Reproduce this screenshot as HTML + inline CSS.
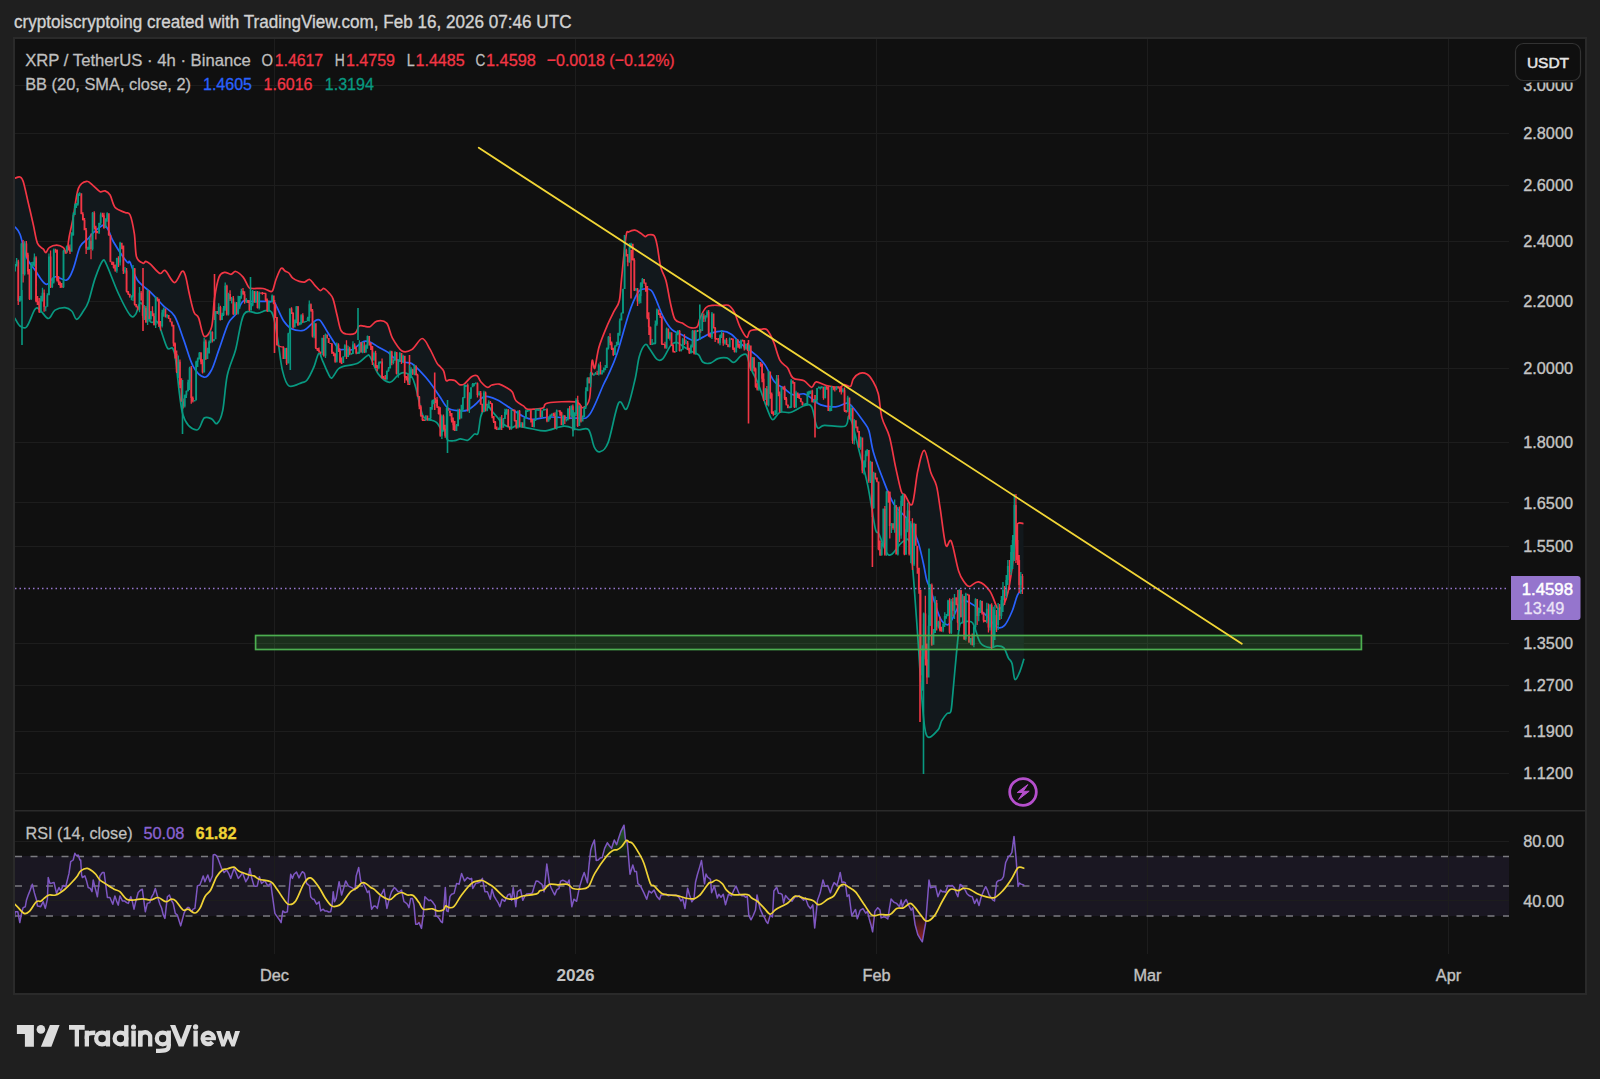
<!DOCTYPE html><html><head><meta charset="utf-8"><style>html,body{margin:0;padding:0;background:#1f1f1f;width:1600px;height:1079px;overflow:hidden}svg{display:block}text{font-family:"Liberation Sans", sans-serif}</style></head><body>
<svg width="1600" height="1079" viewBox="0 0 1600 1079" >
<rect x="0" y="0" width="1600" height="1079" fill="#1f1f1f"/>
<text x="14" y="28" font-size="17.5" fill="#d2d2d2" stroke="#d2d2d2" stroke-width="0.35" textLength="557.5" lengthAdjust="spacingAndGlyphs">cryptoiscryptoing created with TradingView.com, Feb 16, 2026 07:46 UTC</text>
<rect x="14" y="38" width="1572" height="956" fill="#101010" stroke="#2a2a2a" stroke-width="2"/>
<defs><clipPath id="mainclip"><rect x="15" y="39" width="1494" height="771"/></clipPath><clipPath id="rsiclip"><rect x="15" y="811" width="1494" height="143"/></clipPath><linearGradient id="obg" gradientUnits="userSpaceOnUse" x1="0" y1="822" x2="0" y2="856"><stop offset="0" stop-color="#2e7d32" stop-opacity="0.85"/><stop offset="1" stop-color="#2e7d32" stop-opacity="0.05"/></linearGradient><linearGradient id="osg" gradientUnits="userSpaceOnUse" x1="0" y1="916" x2="0" y2="944"><stop offset="0" stop-color="#c62828" stop-opacity="0.05"/><stop offset="1" stop-color="#c62828" stop-opacity="0.85"/></linearGradient></defs>
<path d="M15 85.5H1509 M15 133.5H1509 M15 185.5H1509 M15 241.5H1509 M15 301.5H1509 M15 368.5H1509 M15 442.5H1509 M15 502.5H1509 M15 546.5H1509 M15 643.5H1509 M15 685.5H1509 M15 731.5H1509 M15 773.5H1509 M274.5 39V954 M575.5 39V954 M876.5 39V954 M1147.5 39V954 M1448.5 39V954" stroke="#1d1d1d" stroke-width="1" fill="none"/>
<rect x="15" y="810" width="1570" height="1.5" fill="#2a2a2a"/>
<g clip-path="url(#mainclip)">
<polygon points="14.7,178.3 20.0,177.0 23.3,181.7 28.4,203.4 33.4,225.1 37.5,243.4 43.4,249.2 45.9,252.6 49.2,247.6 56.7,245.1 63.4,247.6 66.7,252.6 69.2,236.7 73.4,216.7 78.4,188.4 86.7,181.3 93.4,185.8 100.1,191.7 105.1,190.9 110.1,195.0 115.1,207.5 125.1,212.5 130.1,215.0 134.3,233.4 136.5,256.7 143.0,263.2 145.8,261.3 150.4,264.1 159.7,273.4 165.2,270.6 174.5,282.6 181.9,271.5 185.6,276.2 189.3,293.8 194.0,312.3 198.6,317.9 204.2,336.4 211.6,327.1 214.4,299.3 219.0,277.1 224.5,272.4 231.0,274.3 235.7,271.5 243.1,277.1 248.7,287.3 252.6,288.5 263.0,288.5 269.5,291.1 272.7,290.5 276.0,279.5 281.1,268.4 285.0,271.0 288.9,273.0 292.8,278.2 299.3,281.4 304.5,282.1 309.7,279.5 314.9,285.3 320.1,290.5 324.0,288.5 329.2,293.1 333.0,298.9 336.9,314.5 340.8,330.1 346.0,334.0 355.1,333.3 359.0,326.2 364.2,326.2 370.0,326.7 377.0,321.1 386.7,323.2 392.3,337.8 402.0,351.0 411.7,349.6 422.2,338.5 429.8,348.9 436.8,362.9 440.0,366.5 443.7,371.1 446.0,380.4 449.3,379.9 454.8,380.4 459.5,384.6 464.1,384.1 471.5,376.7 477.1,375.8 480.8,381.8 487.3,387.3 491.9,385.0 499.3,384.1 506.7,387.8 512.3,392.0 516.0,400.8 523.4,405.9 527.1,409.1 534.5,409.1 543.3,407.7 547.9,403.0 575.7,401.9 582.7,407.7 589.6,398.4 592.0,361.3 594.8,368.3 598.9,347.4 606.7,326.8 614.1,311.2 619.3,300.8 621.5,279.3 626.0,236.3 628.9,231.9 634.9,230.1 640.8,233.3 645.2,236.6 648.2,234.8 654.1,235.6 657.1,245.2 660.8,267.4 666.0,280.8 670.4,303.0 674.9,319.3 682.3,323.1 689.7,327.5 697.1,326.8 700.1,317.9 706.0,307.5 713.5,305.3 720.9,305.7 728.3,305.3 734.2,311.9 740.0,326.8 746.7,337.3 750.4,330.8 761.5,329.3 767.1,329.9 773.6,341.9 780.0,360.4 787.5,367.8 793.0,378.0 804.1,380.8 811.6,387.3 816.2,381.8 826.4,385.5 839.4,387.3 844.0,384.5 850.5,386.4 853.3,379.0 859.7,373.4 867.2,374.3 872.7,380.8 878.3,393.8 882.0,417.9 889.4,436.4 895.6,467.1 901.2,491.2 904.9,494.9 912.3,504.1 917.8,470.8 924.3,450.4 930.8,472.6 936.4,485.6 940.1,507.8 945.7,544.9 951.2,541.2 958.6,570.9 964.2,582.0 969.4,586.5 978.6,581.9 989.8,591.1 997.2,607.8 1000.9,607.8 1004.5,603.0 1008.0,592.0 1011.5,572.0 1014.5,547.0 1016.3,527.0 1019.0,523.0 1023.5,523.6 1024.0,658.8 1019.4,672.7 1014.8,679.2 1012.0,663.4 1008.3,657.8 1003.7,647.7 997.2,645.8 989.8,647.7 980.5,643.0 974.9,628.2 971.2,621.7 961.9,622.6 959.2,628.2 956.4,654.1 952.7,694.9 950.8,711.6 947.1,713.5 941.6,720.9 937.8,730.1 926.7,735.7 922.0,700.0 918.0,640.0 912.0,560.0 908.6,540.3 901.2,543.1 891.9,554.2 886.3,552.3 878.9,533.8 875.2,528.2 867.8,485.6 859.7,453.1 852.3,423.5 848.6,416.0 844.9,426.2 824.5,425.3 817.1,427.2 811.6,406.8 804.1,405.8 791.2,412.3 780.0,412.3 772.6,419.7 767.1,408.6 757.8,382.7 750.4,367.8 746.7,354.9 741.1,355.8 735.6,361.4 732.7,362.3 726.8,357.9 717.9,358.6 710.5,363.1 703.1,362.3 698.6,354.9 692.7,352.0 683.8,346.8 676.4,342.3 670.4,346.0 663.0,358.6 657.1,359.4 649.7,349.0 645.2,344.6 639.3,356.4 634.9,380.0 626.7,408.8 618.6,403.0 608.2,442.4 600.1,451.7 594.3,447.1 588.5,429.7 578.0,429.7 564.1,426.2 545.6,430.8 532.7,429.0 523.4,427.2 516.9,425.3 511.4,427.7 503.0,424.0 497.5,417.5 491.9,411.0 487.3,404.5 484.5,408.2 480.8,416.5 478.0,433.2 474.3,434.1 467.8,440.2 460.4,438.8 454.8,440.6 447.4,439.7 444.6,428.6 442.3,431.0 436.8,422.7 431.2,419.9 422.9,415.7 415.9,387.9 411.7,376.8 403.4,372.6 397.8,375.4 389.5,382.3 378.3,374.0 370.0,356.6 366.8,356.0 357.7,363.2 343.4,366.4 338.2,369.0 331.7,378.1 327.9,372.9 322.7,361.2 318.8,353.4 313.6,367.7 307.1,380.0 301.9,382.6 288.9,385.9 282.4,370.3 278.5,344.3 274.7,322.3 271.4,311.9 265.6,310.6 257.8,313.2 244.0,314.2 235.7,349.4 227.3,375.3 222.7,410.6 217.1,423.5 211.6,418.9 204.2,418.0 196.7,430.0 182.8,414.3 174.5,353.1 167.1,347.5 157.8,322.5 150.4,321.6 141.1,303.0 135.6,314.2 130.1,315.1 118.4,293.5 106.8,265.1 102.6,260.9 95.1,278.4 88.4,301.8 83.4,311.0 76.7,319.3 71.7,311.0 65.0,307.6 55.0,310.1 48.4,318.5 40.0,310.1 35.0,309.3 26.7,326.8 20.0,326.0 14.7,318.0" fill="#12181c"/>
<path d="M14.7 178.3C15.6 178.1 18.6 176.4 20.0 177.0C21.4 177.6 21.9 177.3 23.3 181.7C24.7 186.1 26.7 196.2 28.4 203.4C30.1 210.6 31.9 218.4 33.4 225.1C34.9 231.8 35.8 239.4 37.5 243.4C39.2 247.4 42.0 247.7 43.4 249.2C44.8 250.7 44.9 252.9 45.9 252.6C46.9 252.3 47.4 248.8 49.2 247.6C51.0 246.3 54.3 245.1 56.7 245.1C59.1 245.1 61.7 246.3 63.4 247.6C65.1 248.8 65.7 254.4 66.7 252.6C67.7 250.8 68.1 242.7 69.2 236.7C70.3 230.7 71.9 224.8 73.4 216.7C74.9 208.6 76.2 194.3 78.4 188.4C80.6 182.5 84.2 181.7 86.7 181.3C89.2 180.9 91.2 184.1 93.4 185.8C95.6 187.5 98.1 190.8 100.1 191.7C102.0 192.5 103.4 190.3 105.1 190.9C106.8 191.5 108.4 192.2 110.1 195.0C111.8 197.8 112.6 204.6 115.1 207.5C117.6 210.4 122.6 211.2 125.1 212.5C127.6 213.8 128.6 211.5 130.1 215.0C131.6 218.5 133.2 226.5 134.3 233.4C135.4 240.3 135.1 251.7 136.5 256.7C137.9 261.7 141.4 262.4 143.0 263.2C144.6 264.0 144.6 261.1 145.8 261.3C147.0 261.5 148.1 262.1 150.4 264.1C152.7 266.1 157.2 272.3 159.7 273.4C162.2 274.5 162.7 269.1 165.2 270.6C167.7 272.1 171.7 282.5 174.5 282.6C177.3 282.8 180.1 272.6 181.9 271.5C183.8 270.4 184.4 272.5 185.6 276.2C186.8 279.9 187.9 287.8 189.3 293.8C190.7 299.8 192.4 308.3 194.0 312.3C195.6 316.3 196.9 313.9 198.6 317.9C200.3 321.9 202.0 334.9 204.2 336.4C206.4 337.9 209.9 333.3 211.6 327.1C213.3 320.9 213.2 307.6 214.4 299.3C215.6 291.0 217.3 281.6 219.0 277.1C220.7 272.6 222.5 272.9 224.5 272.4C226.5 271.9 229.1 274.4 231.0 274.3C232.9 274.2 233.7 271.0 235.7 271.5C237.7 272.0 240.9 274.5 243.1 277.1C245.3 279.7 247.1 285.4 248.7 287.3C250.3 289.2 250.2 288.3 252.6 288.5C255.0 288.7 260.2 288.1 263.0 288.5C265.8 288.9 267.9 290.8 269.5 291.1C271.1 291.4 271.6 292.4 272.7 290.5C273.8 288.6 274.6 283.2 276.0 279.5C277.4 275.8 279.6 269.8 281.1 268.4C282.6 267.0 283.7 270.2 285.0 271.0C286.3 271.8 287.6 271.8 288.9 273.0C290.2 274.2 291.1 276.8 292.8 278.2C294.5 279.6 297.4 280.8 299.3 281.4C301.2 282.0 302.8 282.4 304.5 282.1C306.2 281.8 308.0 279.0 309.7 279.5C311.4 280.0 313.2 283.5 314.9 285.3C316.6 287.1 318.6 290.0 320.1 290.5C321.6 291.0 322.5 288.1 324.0 288.5C325.5 288.9 327.7 291.4 329.2 293.1C330.7 294.8 331.7 295.3 333.0 298.9C334.3 302.5 335.6 309.3 336.9 314.5C338.2 319.7 339.3 326.9 340.8 330.1C342.3 333.4 343.6 333.5 346.0 334.0C348.4 334.5 352.9 334.6 355.1 333.3C357.3 332.0 357.5 327.4 359.0 326.2C360.5 325.0 362.4 326.1 364.2 326.2C366.0 326.3 367.9 327.5 370.0 326.7C372.1 325.9 374.2 321.7 377.0 321.1C379.8 320.5 384.1 320.4 386.7 323.2C389.2 326.0 389.8 333.2 392.3 337.8C394.9 342.4 398.8 349.0 402.0 351.0C405.2 353.0 408.3 351.7 411.7 349.6C415.1 347.5 419.2 338.6 422.2 338.5C425.2 338.4 427.4 344.8 429.8 348.9C432.2 353.0 435.1 360.0 436.8 362.9C438.5 365.8 438.9 365.1 440.0 366.5C441.1 367.9 442.7 368.8 443.7 371.1C444.7 373.4 445.1 378.9 446.0 380.4C446.9 381.9 447.8 379.9 449.3 379.9C450.8 379.9 453.1 379.6 454.8 380.4C456.5 381.2 457.9 384.0 459.5 384.6C461.1 385.2 462.1 385.4 464.1 384.1C466.1 382.8 469.3 378.1 471.5 376.7C473.7 375.3 475.6 374.9 477.1 375.8C478.7 376.7 479.1 379.9 480.8 381.8C482.5 383.7 485.5 386.8 487.3 387.3C489.1 387.8 489.9 385.5 491.9 385.0C493.9 384.5 496.8 383.6 499.3 384.1C501.8 384.6 504.5 386.5 506.7 387.8C508.9 389.1 510.7 389.8 512.3 392.0C513.8 394.2 514.1 398.5 516.0 400.8C517.9 403.1 521.5 404.5 523.4 405.9C525.2 407.3 525.2 408.6 527.1 409.1C529.0 409.6 531.8 409.3 534.5 409.1C537.2 408.9 541.1 408.7 543.3 407.7C545.5 406.7 542.5 404.0 547.9 403.0C553.3 402.0 569.9 401.1 575.7 401.9C581.5 402.7 580.4 408.3 582.7 407.7C585.0 407.1 588.1 406.1 589.6 398.4C591.1 390.7 591.1 366.3 592.0 361.3C592.9 356.3 593.6 370.6 594.8 368.3C595.9 366.0 596.9 354.3 598.9 347.4C600.9 340.5 604.2 332.8 606.7 326.8C609.2 320.8 612.0 315.5 614.1 311.2C616.2 306.9 618.1 306.1 619.3 300.8C620.5 295.5 620.4 290.1 621.5 279.3C622.6 268.6 624.8 244.2 626.0 236.3C627.2 228.4 627.4 232.9 628.9 231.9C630.4 230.9 632.9 229.9 634.9 230.1C636.9 230.3 639.1 232.2 640.8 233.3C642.5 234.4 644.0 236.3 645.2 236.6C646.4 236.8 646.7 235.0 648.2 234.8C649.7 234.6 652.6 233.9 654.1 235.6C655.6 237.3 656.0 239.9 657.1 245.2C658.2 250.5 659.3 261.5 660.8 267.4C662.3 273.3 664.4 274.9 666.0 280.8C667.6 286.7 668.9 296.6 670.4 303.0C671.9 309.4 672.9 315.9 674.9 319.3C676.9 322.7 679.8 321.7 682.3 323.1C684.8 324.5 687.2 326.9 689.7 327.5C692.2 328.1 695.4 328.4 697.1 326.8C698.8 325.2 698.6 321.1 700.1 317.9C701.6 314.7 703.8 309.6 706.0 307.5C708.2 305.4 711.0 305.6 713.5 305.3C716.0 305.0 718.4 305.7 720.9 305.7C723.4 305.7 726.1 304.3 728.3 305.3C730.5 306.3 732.2 308.3 734.2 311.9C736.2 315.5 737.9 322.6 740.0 326.8C742.1 331.0 745.0 336.6 746.7 337.3C748.4 338.0 747.9 332.1 750.4 330.8C752.9 329.5 758.7 329.5 761.5 329.3C764.3 329.1 765.1 327.8 767.1 329.9C769.1 332.0 771.5 336.8 773.6 341.9C775.8 347.0 777.7 356.1 780.0 360.4C782.3 364.7 785.3 364.9 787.5 367.8C789.7 370.7 790.2 375.8 793.0 378.0C795.8 380.2 801.0 379.2 804.1 380.8C807.2 382.4 809.6 387.1 811.6 387.3C813.6 387.5 813.7 382.1 816.2 381.8C818.7 381.5 822.5 384.6 826.4 385.5C830.3 386.4 836.5 387.5 839.4 387.3C842.3 387.1 842.1 384.6 844.0 384.5C845.9 384.4 849.0 387.3 850.5 386.4C852.0 385.5 851.8 381.2 853.3 379.0C854.8 376.8 857.4 374.2 859.7 373.4C862.0 372.6 865.0 373.1 867.2 374.3C869.4 375.5 870.9 377.6 872.7 380.8C874.6 384.1 876.8 387.6 878.3 393.8C879.8 400.0 880.1 410.8 882.0 417.9C883.9 425.0 887.1 428.2 889.4 436.4C891.7 444.6 893.6 458.0 895.6 467.1C897.6 476.2 899.7 486.6 901.2 491.2C902.8 495.8 903.0 492.8 904.9 494.9C906.8 497.0 910.1 508.1 912.3 504.1C914.4 500.1 915.8 479.8 917.8 470.8C919.8 461.9 922.1 450.1 924.3 450.4C926.5 450.7 928.8 466.7 930.8 472.6C932.8 478.5 934.8 479.7 936.4 485.6C938.0 491.5 938.5 497.9 940.1 507.8C941.7 517.7 943.9 539.3 945.7 544.9C947.6 550.5 949.1 536.9 951.2 541.2C953.4 545.5 956.4 564.1 958.6 570.9C960.8 577.7 962.4 579.4 964.2 582.0C966.0 584.6 967.0 586.5 969.4 586.5C971.8 586.5 975.2 581.1 978.6 581.9C982.0 582.7 986.7 586.8 989.8 591.1C992.9 595.4 995.4 605.0 997.2 607.8C999.1 610.6 999.7 608.6 1000.9 607.8C1002.1 607.0 1003.3 605.6 1004.5 603.0C1005.7 600.4 1006.8 597.2 1008.0 592.0C1009.2 586.8 1010.4 579.5 1011.5 572.0C1012.6 564.5 1013.7 554.5 1014.5 547.0C1015.3 539.5 1015.5 531.0 1016.3 527.0C1017.0 523.0 1017.8 523.6 1019.0 523.0C1020.2 522.4 1022.8 523.5 1023.5 523.6" fill="none" stroke="#f23645" stroke-width="1.7" stroke-linejoin="round"/>
<path d="M14.7 318.0C15.6 319.3 18.0 324.5 20.0 326.0C22.0 327.5 24.2 329.6 26.7 326.8C29.2 324.0 32.8 312.1 35.0 309.3C37.2 306.5 37.8 308.6 40.0 310.1C42.2 311.6 45.9 318.5 48.4 318.5C50.9 318.5 52.2 311.9 55.0 310.1C57.8 308.3 62.2 307.5 65.0 307.6C67.8 307.8 69.8 309.1 71.7 311.0C73.7 312.9 74.8 319.3 76.7 319.3C78.7 319.3 81.5 313.9 83.4 311.0C85.4 308.1 86.5 307.2 88.4 301.8C90.4 296.4 92.7 285.2 95.1 278.4C97.5 271.6 100.6 263.1 102.6 260.9C104.5 258.7 104.2 259.7 106.8 265.1C109.4 270.5 114.5 285.2 118.4 293.5C122.3 301.8 127.2 311.7 130.1 315.1C133.0 318.6 133.8 316.2 135.6 314.2C137.4 312.2 138.6 301.8 141.1 303.0C143.6 304.2 147.6 318.4 150.4 321.6C153.2 324.9 155.0 318.2 157.8 322.5C160.6 326.8 164.3 342.4 167.1 347.5C169.9 352.6 171.9 342.0 174.5 353.1C177.1 364.2 179.1 401.5 182.8 414.3C186.5 427.1 193.1 429.4 196.7 430.0C200.3 430.6 201.7 419.9 204.2 418.0C206.7 416.1 209.4 418.0 211.6 418.9C213.8 419.8 215.2 424.9 217.1 423.5C218.9 422.1 221.0 418.6 222.7 410.6C224.4 402.6 225.1 385.5 227.3 375.3C229.5 365.1 232.9 359.6 235.7 349.4C238.5 339.2 240.3 320.2 244.0 314.2C247.7 308.2 254.2 313.8 257.8 313.2C261.4 312.6 263.3 310.8 265.6 310.6C267.9 310.4 269.9 309.9 271.4 311.9C272.9 313.8 273.5 316.9 274.7 322.3C275.9 327.7 277.2 336.3 278.5 344.3C279.8 352.3 280.7 363.4 282.4 370.3C284.1 377.2 285.6 383.8 288.9 385.9C292.1 387.9 298.9 383.6 301.9 382.6C304.9 381.6 305.2 382.5 307.1 380.0C309.1 377.5 311.7 372.1 313.6 367.7C315.6 363.3 317.3 354.5 318.8 353.4C320.3 352.3 321.2 357.9 322.7 361.2C324.2 364.4 326.4 370.1 327.9 372.9C329.4 375.7 330.0 378.8 331.7 378.1C333.4 377.5 336.2 370.9 338.2 369.0C340.1 367.1 340.1 367.4 343.4 366.4C346.6 365.4 353.8 364.9 357.7 363.2C361.6 361.5 364.8 357.1 366.8 356.0C368.9 354.9 368.1 353.6 370.0 356.6C371.9 359.6 375.1 369.7 378.3 374.0C381.6 378.3 386.2 382.1 389.5 382.3C392.8 382.5 395.5 377.0 397.8 375.4C400.1 373.8 401.1 372.4 403.4 372.6C405.7 372.8 409.6 374.2 411.7 376.8C413.8 379.4 414.0 381.4 415.9 387.9C417.8 394.4 420.3 410.4 422.9 415.7C425.4 421.0 428.9 418.7 431.2 419.9C433.5 421.1 434.9 420.8 436.8 422.7C438.7 424.6 441.0 430.0 442.3 431.0C443.6 432.0 443.8 427.2 444.6 428.6C445.5 430.1 445.7 437.7 447.4 439.7C449.1 441.7 452.6 440.8 454.8 440.6C457.0 440.5 458.2 438.9 460.4 438.8C462.6 438.7 465.5 441.0 467.8 440.2C470.1 439.4 472.6 435.3 474.3 434.1C476.0 432.9 476.9 436.1 478.0 433.2C479.1 430.3 479.7 420.7 480.8 416.5C481.9 412.3 483.4 410.2 484.5 408.2C485.6 406.2 486.1 404.0 487.3 404.5C488.5 405.0 490.2 408.8 491.9 411.0C493.6 413.2 495.6 415.3 497.5 417.5C499.4 419.7 500.7 422.3 503.0 424.0C505.3 425.7 509.1 427.5 511.4 427.7C513.7 427.9 514.9 425.4 516.9 425.3C518.9 425.2 520.8 426.6 523.4 427.2C526.0 427.8 529.0 428.4 532.7 429.0C536.4 429.6 540.4 431.3 545.6 430.8C550.8 430.3 558.7 426.4 564.1 426.2C569.5 426.0 573.9 429.1 578.0 429.7C582.1 430.3 585.8 426.8 588.5 429.7C591.2 432.6 592.4 443.4 594.3 447.1C596.2 450.8 597.8 452.5 600.1 451.7C602.4 450.9 605.1 450.5 608.2 442.4C611.3 434.3 615.5 408.6 618.6 403.0C621.7 397.4 624.0 412.6 626.7 408.8C629.4 405.0 632.8 388.7 634.9 380.0C637.0 371.3 637.6 362.3 639.3 356.4C641.0 350.5 643.5 345.8 645.2 344.6C646.9 343.4 647.7 346.5 649.7 349.0C651.7 351.5 654.9 357.8 657.1 359.4C659.3 361.0 660.8 360.8 663.0 358.6C665.2 356.4 668.2 348.7 670.4 346.0C672.6 343.3 674.2 342.2 676.4 342.3C678.6 342.4 681.1 345.2 683.8 346.8C686.5 348.4 690.2 350.6 692.7 352.0C695.2 353.4 696.9 353.2 698.6 354.9C700.3 356.6 701.1 360.9 703.1 362.3C705.1 363.7 708.0 363.7 710.5 363.1C713.0 362.5 715.2 359.5 717.9 358.6C720.6 357.7 724.3 357.3 726.8 357.9C729.3 358.5 731.2 361.7 732.7 362.3C734.2 362.9 734.2 362.5 735.6 361.4C737.0 360.3 739.2 356.9 741.1 355.8C743.0 354.7 745.2 352.9 746.7 354.9C748.2 356.9 748.5 363.2 750.4 367.8C752.2 372.4 755.0 375.9 757.8 382.7C760.6 389.5 764.6 402.4 767.1 408.6C769.6 414.8 770.5 419.1 772.6 419.7C774.8 420.3 776.9 413.5 780.0 412.3C783.1 411.1 787.2 413.4 791.2 412.3C795.2 411.2 800.7 406.7 804.1 405.8C807.5 404.9 809.4 403.2 811.6 406.8C813.8 410.4 815.0 424.1 817.1 427.2C819.2 430.3 819.9 425.5 824.5 425.3C829.1 425.1 840.9 427.8 844.9 426.2C848.9 424.6 847.4 416.4 848.6 416.0C849.8 415.6 850.4 417.3 852.3 423.5C854.1 429.7 857.1 442.8 859.7 453.1C862.3 463.5 865.2 473.1 867.8 485.6C870.4 498.1 873.4 520.2 875.2 528.2C877.1 536.2 877.0 529.8 878.9 533.8C880.8 537.8 884.1 548.9 886.3 552.3C888.5 555.7 889.4 555.7 891.9 554.2C894.4 552.7 898.4 545.4 901.2 543.1C904.0 540.8 906.8 537.5 908.6 540.3C910.4 543.1 910.4 543.4 912.0 560.0C913.6 576.6 916.3 616.7 918.0 640.0C919.7 663.3 920.5 684.0 922.0 700.0C923.5 716.0 924.1 730.7 926.7 735.7C929.3 740.7 935.3 732.6 937.8 730.1C940.3 727.6 940.0 723.7 941.6 720.9C943.2 718.1 945.6 715.0 947.1 713.5C948.6 712.0 949.9 714.7 950.8 711.6C951.7 708.5 951.8 704.5 952.7 694.9C953.6 685.3 955.3 665.2 956.4 654.1C957.5 643.0 958.3 633.5 959.2 628.2C960.1 623.0 959.9 623.7 961.9 622.6C963.9 621.5 969.0 620.8 971.2 621.7C973.4 622.6 973.4 624.7 974.9 628.2C976.4 631.8 978.0 639.8 980.5 643.0C983.0 646.2 987.0 647.2 989.8 647.7C992.6 648.2 994.9 645.8 997.2 645.8C999.5 645.8 1001.9 645.7 1003.7 647.7C1005.6 649.7 1006.9 655.2 1008.3 657.8C1009.7 660.4 1010.9 659.8 1012.0 663.4C1013.1 667.0 1013.6 677.7 1014.8 679.2C1016.0 680.8 1017.9 676.1 1019.4 672.7C1020.9 669.3 1023.2 661.1 1024.0 658.8" fill="none" stroke="#089981" stroke-width="1.7" stroke-linejoin="round"/>
<path d="M14.7 226.7C15.6 227.9 18.0 229.0 20.0 234.2C22.0 239.3 24.2 251.6 26.7 257.6C29.2 263.6 31.8 265.7 35.0 270.1C38.2 274.6 42.6 283.2 45.9 284.3C49.2 285.4 51.5 277.5 55.0 276.8C58.5 276.1 63.6 281.5 66.7 280.1C69.8 278.7 71.2 274.0 73.4 268.4C75.6 262.8 77.6 251.7 80.1 246.7C82.6 241.7 86.2 240.8 88.4 238.4C90.6 236.1 90.9 234.8 93.4 232.6C95.9 230.4 100.9 225.5 103.4 225.1C105.9 224.7 106.7 227.3 108.4 230.1C110.1 232.9 110.3 236.4 113.4 241.7C116.5 247.0 124.0 258.4 126.8 261.8C129.6 265.2 128.2 259.2 130.0 262.2C131.8 265.2 133.7 274.6 137.4 279.9C141.1 285.2 147.9 289.5 152.2 293.8C156.5 298.1 159.7 302.1 163.4 305.8C167.1 309.5 171.1 310.3 174.5 316.0C177.9 321.7 180.7 331.8 183.8 340.1C186.9 348.5 189.6 359.9 193.0 366.1C196.4 372.3 201.1 376.6 204.2 377.2C207.3 377.8 209.1 374.4 211.6 369.8C214.1 365.2 216.2 357.1 219.0 349.4C221.8 341.7 225.5 329.3 228.3 323.4C231.1 317.5 233.2 317.9 235.7 314.2C238.2 310.5 240.3 303.3 243.1 301.2C245.9 299.1 247.8 301.4 252.6 301.5C257.4 301.6 268.2 300.9 272.1 301.5C276.0 302.1 274.1 302.1 276.0 305.4C277.9 308.6 281.1 317.1 283.7 321.0C286.3 324.9 288.5 327.2 291.5 328.8C294.5 330.4 299.3 330.8 301.9 330.7C304.5 330.6 304.9 329.7 307.1 328.1C309.3 326.5 312.7 322.3 314.9 321.0C317.1 319.7 317.9 318.4 320.1 320.3C322.3 322.2 324.9 328.1 327.9 332.7C330.9 337.3 335.6 345.4 338.2 348.2C340.8 351.0 341.0 349.3 343.4 349.5C345.8 349.7 349.2 350.8 352.5 349.5C355.8 348.2 360.0 342.9 362.9 341.7C365.8 340.4 367.4 341.1 370.0 342.0C372.6 342.9 375.3 345.2 378.3 346.9C381.3 348.6 385.3 350.4 388.1 352.4C390.9 354.4 392.2 357.1 395.0 358.7C397.8 360.3 402.0 361.4 404.8 362.2C407.6 363.0 409.1 362.0 411.7 363.5C414.2 365.0 417.1 368.1 420.1 371.2C423.1 374.3 426.6 378.1 429.8 382.3C433.0 386.5 436.5 391.9 439.5 396.2C442.5 400.5 444.6 405.7 447.9 408.1C451.1 410.5 455.8 410.5 459.0 410.8C462.2 411.1 464.7 411.2 467.4 410.1C470.1 409.1 472.7 406.6 475.2 404.5C477.7 402.4 480.4 398.8 482.6 397.5C484.8 396.2 485.7 396.2 488.2 396.6C490.7 397.0 493.8 398.0 497.5 399.9C501.2 401.8 506.1 405.4 510.4 408.2C514.7 411.0 519.7 414.6 523.4 416.5C527.1 418.4 528.2 419.2 532.7 419.3C537.2 419.4 542.7 417.2 550.2 417.0C557.8 416.8 571.4 418.5 578.0 418.1C584.6 417.7 585.4 420.2 589.6 414.6C593.9 409.0 600.4 391.1 603.5 384.5C606.6 377.9 605.9 380.2 608.2 375.0C610.5 369.8 613.7 363.8 617.1 353.5C620.5 343.2 625.5 323.5 628.9 313.4C632.3 303.3 635.3 296.8 637.8 292.7C640.3 288.6 641.6 289.4 643.8 289.0C646.0 288.6 649.2 288.8 651.2 290.4C653.2 292.0 653.6 294.3 655.6 298.6C657.6 302.9 660.3 311.2 663.0 316.4C665.7 321.6 668.9 326.7 671.9 329.7C674.9 332.7 677.1 332.3 680.8 334.2C684.5 336.1 690.5 340.3 694.2 340.8C697.9 341.3 700.4 338.3 703.1 337.1C705.8 335.9 707.3 334.4 710.5 333.4C713.7 332.4 718.8 331.1 722.3 331.2C725.8 331.3 728.1 332.1 731.2 334.2C734.3 336.3 738.2 341.3 741.1 343.8C744.0 346.3 745.7 347.2 748.5 349.3C751.3 351.4 755.0 354.1 757.8 356.7C760.6 359.3 762.4 360.9 765.2 365.1C768.0 369.3 771.4 378.0 774.5 381.8C777.6 385.6 780.7 386.1 783.8 388.2C786.9 390.3 789.6 393.8 793.0 394.7C796.4 395.6 801.0 393.2 804.1 393.8C807.2 394.4 808.8 396.5 811.6 398.4C814.4 400.2 816.8 403.5 820.8 404.9C824.8 406.3 831.4 407.1 835.7 406.8C840.0 406.5 844.0 403.1 846.8 403.1C849.6 403.1 849.5 403.7 852.3 406.8C855.1 409.9 860.7 417.6 863.5 421.6C866.3 425.6 867.4 425.8 869.0 430.9C870.6 436.0 871.1 444.3 873.4 452.2C875.7 460.1 879.2 469.5 882.6 478.2C886.0 486.9 889.5 497.0 893.8 504.1C898.1 511.2 904.6 514.6 908.6 520.8C912.6 527.0 915.3 534.1 917.8 541.2C920.3 548.3 921.9 557.0 923.4 563.5C924.9 570.0 925.5 575.7 926.7 580.0C927.9 584.3 928.2 583.1 930.4 589.3C932.6 595.5 937.1 611.2 939.7 617.1C942.3 623.0 944.4 623.7 946.2 624.5C948.1 625.3 948.8 624.6 950.8 621.7C952.8 618.8 956.0 610.5 958.2 606.9C960.4 603.3 961.0 600.5 963.8 600.4C966.6 600.2 971.2 603.5 974.9 606.0C978.6 608.5 982.3 611.7 986.0 615.2C989.7 618.8 994.1 625.6 997.2 627.3C1000.3 629.0 1002.1 628.0 1004.6 625.4C1007.1 622.8 1009.8 616.6 1012.0 611.5C1014.2 606.4 1015.9 598.3 1017.6 594.8C1019.3 591.2 1021.4 591.0 1022.2 590.2" fill="none" stroke="#2962ff" stroke-width="1.7" stroke-linejoin="round"/>
<path d="M17.58 259.8h1.3V304.9h-1.3ZM17.28 261.6h1.9V301.1h-1.9ZM22.44 240.1h1.3V282.5h-1.3ZM22.14 243.7h1.9V274.1h-1.9ZM25.67 241.0h1.3V257.7h-1.3ZM25.37 243.5h1.9V254.7h-1.9ZM27.29 252.8h1.3V274.5h-1.3ZM26.99 254.7h1.9V271.4h-1.9ZM28.90 268.9h1.3V300.0h-1.3ZM28.60 271.4h1.9V299.0h-1.9ZM35.37 256.3h1.3V302.2h-1.3ZM35.07 257.5h1.9V301.3h-1.9ZM36.99 296.0h1.3V305.1h-1.3ZM36.69 301.3h1.9V304.9h-1.9ZM38.60 298.0h1.3V313.0h-1.3ZM38.30 304.9h1.9V312.0h-1.9ZM43.46 289.6h1.3V311.8h-1.3ZM43.16 292.8h1.9V306.8h-1.9ZM49.92 250.4h1.3V288.0h-1.3ZM49.62 256.4h1.9V287.0h-1.9ZM54.77 248.8h1.3V252.7h-1.3ZM54.47 249.6h1.9V250.6h-1.9ZM56.39 249.4h1.3V281.4h-1.3ZM56.09 249.8h1.9V280.6h-1.9ZM58.01 276.0h1.3V284.9h-1.3ZM57.71 280.6h1.9V283.0h-1.9ZM59.63 281.5h1.3V288.0h-1.3ZM59.33 283.0h1.9V285.9h-1.9ZM61.24 283.1h1.3V288.0h-1.3ZM60.94 285.9h1.9V287.0h-1.9ZM64.48 250.2h1.3V253.8h-1.3ZM64.18 250.7h1.9V251.7h-1.9ZM67.71 245.3h1.3V250.6h-1.3ZM67.41 246.4h1.9V248.5h-1.9ZM69.33 244.4h1.3V254.1h-1.3ZM69.03 248.5h1.9V251.7h-1.9ZM80.65 195.6h1.3V214.2h-1.3ZM80.35 193.2h1.9V213.9h-1.9ZM82.26 212.2h1.3V220.4h-1.3ZM81.96 213.9h1.9V219.9h-1.9ZM83.88 217.9h1.3V230.2h-1.3ZM83.58 219.9h1.9V230.2h-1.9ZM85.50 228.1h1.3V254.0h-1.3ZM85.20 230.2h1.9V248.6h-1.9ZM90.35 233.4h1.3V259.3h-1.3ZM90.05 240.8h1.9V248.9h-1.9ZM93.58 211.3h1.3V229.6h-1.3ZM93.28 212.8h1.9V227.4h-1.9ZM95.20 225.8h1.3V239.4h-1.3ZM94.90 227.4h1.9V232.3h-1.9ZM96.82 231.0h1.3V232.9h-1.3ZM96.52 232.3h1.9V233.3h-1.9ZM101.67 212.7h1.3V217.2h-1.3ZM101.37 214.5h1.9V215.6h-1.9ZM103.29 212.7h1.3V228.7h-1.3ZM102.99 215.6h1.9V228.1h-1.9ZM108.14 219.5h1.3V235.7h-1.3ZM107.84 213.3h1.9V235.2h-1.9ZM109.75 234.8h1.3V262.3h-1.3ZM109.45 235.2h1.9V261.8h-1.9ZM111.37 261.4h1.3V265.0h-1.3ZM111.07 261.8h1.9V264.8h-1.9ZM112.99 261.8h1.3V268.6h-1.3ZM112.69 264.8h1.9V267.8h-1.9ZM114.60 264.5h1.3V271.8h-1.3ZM114.30 267.8h1.9V270.8h-1.9ZM117.84 256.3h1.3V267.0h-1.3ZM117.54 258.1h1.9V262.6h-1.9ZM121.07 244.5h1.3V249.3h-1.3ZM120.77 242.8h1.9V245.5h-1.9ZM122.69 247.2h1.3V273.9h-1.3ZM122.39 245.5h1.9V271.1h-1.9ZM125.92 267.9h1.3V292.5h-1.3ZM125.62 270.5h1.9V291.5h-1.9ZM127.54 291.0h1.3V295.1h-1.3ZM127.24 291.5h1.9V294.1h-1.9ZM129.16 293.8h1.3V297.7h-1.3ZM128.86 294.1h1.9V296.7h-1.9ZM134.01 267.9h1.3V305.5h-1.3ZM133.71 268.4h1.9V304.5h-1.9ZM135.63 304.1h1.3V307.4h-1.3ZM135.33 304.5h1.9V307.0h-1.9ZM137.24 306.2h1.3V310.6h-1.3ZM136.94 307.0h1.9V309.6h-1.9ZM140.48 291.0h1.3V300.6h-1.3ZM140.18 292.8h1.9V300.5h-1.9ZM142.09 300.3h1.3V318.1h-1.3ZM141.79 300.5h1.9V315.8h-1.9ZM145.33 306.0h1.3V323.0h-1.3ZM145.03 307.8h1.9V322.0h-1.9ZM148.56 290.8h1.3V319.0h-1.3ZM148.26 290.4h1.9V318.9h-1.9ZM151.79 306.2h1.3V316.2h-1.3ZM151.49 311.2h1.9V316.0h-1.9ZM153.41 313.2h1.3V325.6h-1.3ZM153.11 316.0h1.9V325.0h-1.9ZM156.65 297.7h1.3V301.6h-1.3ZM156.35 297.3h1.9V298.7h-1.9ZM158.26 299.1h1.3V326.9h-1.3ZM157.96 298.7h1.9V324.5h-1.9ZM159.88 321.0h1.3V330.6h-1.3ZM159.58 324.5h1.9V326.0h-1.9ZM164.73 310.8h1.3V317.5h-1.3ZM164.43 308.5h1.9V316.5h-1.9ZM167.96 317.2h1.3V318.9h-1.3ZM167.66 315.0h1.9V318.2h-1.9ZM169.58 320.5h1.3V322.2h-1.3ZM169.28 318.2h1.9V321.5h-1.9ZM171.20 323.7h1.3V326.5h-1.3ZM170.90 321.5h1.9V324.7h-1.9ZM172.82 326.9h1.3V346.4h-1.3ZM172.52 324.7h1.9V343.4h-1.9ZM174.43 342.4h1.3V358.5h-1.3ZM174.13 343.4h1.9V354.0h-1.9ZM176.05 350.4h1.3V373.1h-1.3ZM175.75 354.0h1.9V372.3h-1.9ZM179.28 359.6h1.3V388.2h-1.3ZM178.98 361.8h1.9V384.8h-1.9ZM180.90 378.2h1.3V401.8h-1.3ZM180.60 384.8h1.9V401.4h-1.9ZM182.52 398.5h1.3V408.4h-1.3ZM182.22 401.4h1.9V406.2h-1.9ZM190.60 365.9h1.3V403.7h-1.3ZM190.30 367.8h1.9V398.0h-1.9ZM192.22 396.6h1.3V402.6h-1.3ZM191.92 398.0h1.9V401.6h-1.9ZM200.30 352.1h1.3V364.2h-1.3ZM200.00 353.1h1.9V361.7h-1.9ZM201.92 359.2h1.3V373.5h-1.3ZM201.62 361.7h1.9V372.5h-1.9ZM205.16 339.5h1.3V360.0h-1.3ZM204.86 341.4h1.9V359.0h-1.9ZM211.62 331.2h1.3V342.4h-1.3ZM211.32 331.9h1.9V341.2h-1.9ZM216.47 311.0h1.3V314.0h-1.3ZM216.17 311.0h1.9V313.4h-1.9ZM219.71 305.7h1.3V320.4h-1.3ZM219.41 306.9h1.9V319.9h-1.9ZM226.18 284.8h1.3V315.6h-1.3ZM225.88 285.7h1.9V314.6h-1.9ZM229.41 290.3h1.3V301.0h-1.3ZM229.11 294.0h1.9V299.3h-1.9ZM232.64 295.9h1.3V315.0h-1.3ZM232.34 298.5h1.9V314.0h-1.9ZM235.88 302.1h1.3V314.7h-1.3ZM235.58 303.6h1.9V313.7h-1.9ZM242.35 288.0h1.3V294.7h-1.3ZM242.05 291.0h1.9V294.2h-1.9ZM243.96 291.3h1.3V303.7h-1.3ZM243.66 294.2h1.9V301.7h-1.9ZM247.20 300.0h1.3V302.9h-1.3ZM246.90 300.1h1.9V302.4h-1.9ZM248.81 300.3h1.3V311.2h-1.3ZM248.51 302.4h1.9V310.0h-1.9ZM253.67 291.1h1.3V302.7h-1.3ZM253.37 291.1h1.9V302.3h-1.9ZM256.90 291.1h1.3V308.4h-1.3ZM256.60 291.8h1.9V308.1h-1.9ZM260.13 292.4h1.3V293.7h-1.3ZM259.83 292.4h1.9V293.4h-1.9ZM261.75 292.1h1.3V294.7h-1.3ZM261.45 292.8h1.9V293.8h-1.9ZM263.37 292.4h1.3V293.5h-1.3ZM263.07 293.1h1.9V294.1h-1.9ZM264.98 292.7h1.3V301.3h-1.3ZM264.68 293.4h1.9V300.3h-1.9ZM266.60 298.6h1.3V312.0h-1.3ZM266.30 300.3h1.9V311.0h-1.9ZM273.07 303.2h1.3V304.3h-1.3ZM272.77 295.5h1.9V304.2h-1.9ZM274.69 315.9h1.3V317.9h-1.3ZM274.39 304.2h1.9V316.9h-1.9ZM276.30 344.2h1.3V345.5h-1.3ZM276.00 316.9h1.9V345.2h-1.9ZM277.92 345.3h1.3V346.4h-1.3ZM277.62 345.2h1.9V346.3h-1.9ZM279.54 345.9h1.3V346.9h-1.3ZM279.24 346.3h1.9V347.3h-1.9ZM281.15 346.2h1.3V347.6h-1.3ZM280.85 346.6h1.9V347.6h-1.9ZM282.77 346.3h1.3V359.0h-1.3ZM282.47 347.0h1.9V358.9h-1.9ZM286.01 347.7h1.3V365.0h-1.3ZM285.71 348.2h1.9V363.6h-1.9ZM290.86 307.3h1.3V313.9h-1.3ZM290.56 308.5h1.9V313.0h-1.9ZM292.47 312.3h1.3V328.4h-1.3ZM292.17 313.0h1.9V327.4h-1.9ZM297.32 305.9h1.3V326.0h-1.3ZM297.02 306.6h1.9V325.0h-1.9ZM302.18 313.2h1.3V323.1h-1.3ZM301.88 315.3h1.9V322.6h-1.9ZM310.26 303.6h1.3V311.7h-1.3ZM309.96 304.2h1.9V310.8h-1.9ZM311.88 309.1h1.3V337.4h-1.3ZM311.58 310.8h1.9V336.4h-1.9ZM315.11 323.3h1.3V349.1h-1.3ZM314.81 323.3h1.9V348.1h-1.9ZM316.73 348.0h1.3V351.0h-1.3ZM316.43 348.1h1.9V350.2h-1.9ZM318.35 347.4h1.3V352.6h-1.3ZM318.05 350.2h1.9V351.6h-1.9ZM319.96 351.6h1.3V354.0h-1.3ZM319.66 351.6h1.9V353.0h-1.9ZM323.20 335.1h1.3V356.7h-1.3ZM322.90 337.8h1.9V355.7h-1.9ZM326.43 337.0h1.3V338.5h-1.3ZM326.13 334.6h1.9V338.0h-1.9ZM328.05 340.3h1.3V343.1h-1.3ZM327.75 338.0h1.9V343.0h-1.9ZM329.67 342.9h1.3V344.0h-1.3ZM329.37 343.0h1.9V344.0h-1.9ZM331.28 343.2h1.3V354.1h-1.3ZM330.98 343.6h1.9V352.6h-1.9ZM332.90 351.7h1.3V356.3h-1.3ZM332.60 352.6h1.9V353.6h-1.9ZM334.52 353.2h1.3V362.7h-1.3ZM334.22 353.4h1.9V361.8h-1.9ZM337.75 343.3h1.3V352.0h-1.3ZM337.45 344.6h1.9V350.7h-1.9ZM339.37 348.8h1.3V362.7h-1.3ZM339.07 350.7h1.9V362.7h-1.9ZM340.98 357.4h1.3V363.9h-1.3ZM340.68 362.7h1.9V363.7h-1.9ZM345.84 340.3h1.3V359.0h-1.3ZM345.54 345.3h1.9V356.9h-1.9ZM349.07 346.8h1.3V355.3h-1.3ZM348.77 348.4h1.9V354.0h-1.9ZM353.92 343.3h1.3V349.0h-1.3ZM353.62 344.5h1.9V348.7h-1.9ZM355.54 346.7h1.3V354.2h-1.3ZM355.24 348.7h1.9V353.2h-1.9ZM360.39 342.1h1.3V352.6h-1.3ZM360.09 343.6h1.9V352.5h-1.9ZM363.62 341.9h1.3V353.1h-1.3ZM363.32 345.6h1.9V352.1h-1.9ZM368.47 341.5h1.3V345.5h-1.3ZM368.17 336.0h1.9V342.5h-1.9ZM370.09 345.3h1.3V350.1h-1.3ZM369.79 342.5h1.9V346.3h-1.9ZM371.71 345.9h1.3V364.9h-1.3ZM371.41 346.3h1.9V360.0h-1.9ZM374.94 350.7h1.3V368.1h-1.3ZM374.64 353.0h1.9V365.5h-1.9ZM376.56 365.0h1.3V371.2h-1.3ZM376.26 365.5h1.9V368.3h-1.9ZM381.41 358.4h1.3V378.5h-1.3ZM381.11 361.5h1.9V377.7h-1.9ZM383.03 376.0h1.3V378.4h-1.3ZM382.73 377.7h1.9V378.7h-1.9ZM384.64 374.9h1.3V379.7h-1.3ZM384.34 378.3h1.9V379.3h-1.9ZM391.11 350.8h1.3V365.2h-1.3ZM390.81 351.5h1.9V363.1h-1.9ZM395.96 351.9h1.3V374.4h-1.3ZM395.66 352.2h1.9V373.7h-1.9ZM400.81 353.3h1.3V364.1h-1.3ZM400.51 353.0h1.9V361.6h-1.9ZM404.05 356.1h1.3V383.0h-1.3ZM403.75 355.7h1.9V376.6h-1.9ZM405.66 376.0h1.3V380.5h-1.3ZM405.36 376.6h1.9V378.2h-1.9ZM407.28 374.3h1.3V385.1h-1.3ZM406.98 378.2h1.9V382.2h-1.9ZM412.13 368.8h1.3V374.9h-1.3ZM411.83 369.4h1.9V373.8h-1.9ZM415.37 368.0h1.3V375.4h-1.3ZM415.07 365.5h1.9V375.0h-1.9ZM416.98 373.8h1.3V396.8h-1.3ZM416.68 375.0h1.9V396.5h-1.9ZM418.60 396.1h1.3V409.2h-1.3ZM418.30 396.5h1.9V406.4h-1.9ZM420.22 405.2h1.3V416.8h-1.3ZM419.92 406.4h1.9V415.8h-1.9ZM421.83 414.9h1.3V421.0h-1.3ZM421.53 415.8h1.9V420.0h-1.9ZM423.45 419.2h1.3V421.0h-1.3ZM423.15 420.0h1.9V421.0h-1.9ZM426.69 415.5h1.3V420.7h-1.3ZM426.39 415.6h1.9V420.0h-1.9ZM434.77 398.0h1.3V403.1h-1.3ZM434.47 399.5h1.9V400.5h-1.9ZM436.39 396.9h1.3V408.0h-1.3ZM436.09 399.7h1.9V406.4h-1.9ZM438.00 406.2h1.3V414.4h-1.3ZM437.70 406.4h1.9V414.1h-1.9ZM439.62 407.3h1.3V436.8h-1.3ZM439.32 414.1h1.9V435.8h-1.9ZM442.86 414.6h1.3V429.8h-1.3ZM442.56 416.3h1.9V428.9h-1.9ZM444.47 424.7h1.3V437.8h-1.3ZM444.17 428.9h1.9V435.7h-1.9ZM447.71 409.5h1.3V410.7h-1.3ZM447.41 408.1h1.9V410.5h-1.9ZM449.32 412.0h1.3V416.3h-1.3ZM449.02 410.5h1.9V413.0h-1.9ZM450.94 414.4h1.3V422.6h-1.3ZM450.64 413.0h1.9V420.2h-1.9ZM452.56 417.6h1.3V430.3h-1.3ZM452.26 420.2h1.9V425.3h-1.9ZM454.17 420.9h1.3V431.0h-1.3ZM453.87 425.3h1.9V430.9h-1.9ZM459.03 408.7h1.3V419.5h-1.3ZM458.73 411.5h1.9V418.5h-1.9ZM467.11 383.6h1.3V411.6h-1.3ZM466.81 384.9h1.9V409.8h-1.9ZM476.81 382.5h1.3V397.5h-1.3ZM476.51 383.3h1.9V395.0h-1.9ZM480.05 391.1h1.3V404.8h-1.3ZM479.75 392.7h1.9V404.6h-1.9ZM481.66 403.7h1.3V412.2h-1.3ZM481.36 404.6h1.9V411.9h-1.9ZM484.90 391.5h1.3V411.6h-1.3ZM484.60 392.4h1.9V410.6h-1.9ZM489.75 400.9h1.3V404.0h-1.3ZM489.45 401.9h1.9V403.5h-1.9ZM491.37 402.9h1.3V418.3h-1.3ZM491.07 403.5h1.9V416.2h-1.9ZM492.98 415.9h1.3V423.1h-1.3ZM492.68 416.2h1.9V421.4h-1.9ZM494.60 420.9h1.3V429.2h-1.3ZM494.30 421.4h1.9V428.7h-1.9ZM496.22 426.5h1.3V430.0h-1.3ZM495.92 428.7h1.9V429.7h-1.9ZM501.07 415.1h1.3V430.0h-1.3ZM500.77 418.7h1.9V427.7h-1.9ZM507.54 408.9h1.3V427.0h-1.3ZM507.24 409.8h1.9V426.8h-1.9ZM509.15 426.6h1.3V430.0h-1.3ZM508.85 426.8h1.9V429.0h-1.9ZM512.39 409.3h1.3V411.1h-1.3ZM512.09 410.1h1.9V411.1h-1.9ZM514.00 409.5h1.3V421.6h-1.3ZM513.70 410.3h1.9V421.1h-1.9ZM515.62 420.1h1.3V428.7h-1.3ZM515.32 421.1h1.9V427.7h-1.9ZM518.85 410.0h1.3V427.5h-1.3ZM518.55 410.8h1.9V427.1h-1.9ZM522.09 422.3h1.3V427.4h-1.3ZM521.79 423.4h1.9V427.0h-1.9ZM530.17 409.8h1.3V422.4h-1.3ZM529.87 410.3h1.9V419.4h-1.9ZM531.79 418.9h1.3V427.0h-1.3ZM531.49 419.4h1.9V427.0h-1.9ZM539.88 408.4h1.3V417.6h-1.3ZM539.58 409.5h1.9V417.3h-1.9ZM546.34 408.3h1.3V422.2h-1.3ZM546.04 409.1h1.9V421.3h-1.9ZM552.81 412.7h1.3V416.3h-1.3ZM552.51 413.5h1.9V416.1h-1.9ZM554.43 412.2h1.3V428.7h-1.3ZM554.13 416.1h1.9V428.3h-1.9ZM557.66 410.4h1.3V411.6h-1.3ZM557.36 410.6h1.9V411.6h-1.9ZM559.28 410.0h1.3V415.7h-1.3ZM558.98 410.8h1.9V412.4h-1.9ZM560.90 411.8h1.3V425.0h-1.3ZM560.60 412.4h1.9V425.0h-1.9ZM564.13 415.0h1.3V424.0h-1.3ZM563.83 415.9h1.9V420.2h-1.9ZM568.98 406.0h1.3V419.3h-1.3ZM568.68 408.4h1.9V415.4h-1.9ZM572.22 404.4h1.3V431.2h-1.3ZM571.92 406.3h1.9V430.2h-1.9ZM577.07 395.7h1.3V427.0h-1.3ZM576.77 399.9h1.9V426.0h-1.9ZM580.30 405.6h1.3V422.4h-1.3ZM580.00 405.8h1.9V421.4h-1.9ZM588.39 377.1h1.3V383.6h-1.3ZM588.09 378.2h1.9V383.3h-1.9ZM591.62 372.5h1.3V375.3h-1.3ZM591.32 373.3h1.9V374.3h-1.9ZM596.47 370.8h1.3V375.0h-1.3ZM596.17 373.3h1.9V374.3h-1.9ZM599.70 361.7h1.3V374.6h-1.3ZM599.40 365.2h1.9V374.5h-1.9ZM609.41 333.2h1.3V345.3h-1.3ZM609.11 336.9h1.9V342.7h-1.9ZM611.02 341.4h1.3V350.1h-1.3ZM610.72 342.7h1.9V349.1h-1.9ZM612.64 347.7h1.3V356.0h-1.3ZM612.34 349.1h1.9V355.0h-1.9ZM625.58 248.7h1.3V256.6h-1.3ZM625.28 250.1h1.9V256.5h-1.9ZM627.19 254.1h1.3V266.2h-1.3ZM626.89 256.5h1.9V262.2h-1.9ZM632.04 249.7h1.3V260.4h-1.3ZM631.74 243.7h1.9V260.0h-1.9ZM633.66 258.3h1.3V291.0h-1.3ZM633.36 260.0h1.9V290.6h-1.9ZM636.89 288.1h1.3V305.9h-1.3ZM636.59 288.4h1.9V301.6h-1.9ZM643.36 281.4h1.3V283.7h-1.3ZM643.06 278.9h1.9V282.4h-1.9ZM644.98 284.9h1.3V291.7h-1.3ZM644.68 282.4h1.9V285.9h-1.9ZM646.60 288.4h1.3V319.2h-1.3ZM646.30 285.9h1.9V317.7h-1.9ZM648.21 312.2h1.3V335.0h-1.3ZM647.91 317.7h1.9V327.2h-1.9ZM649.83 326.6h1.3V345.1h-1.3ZM649.53 327.2h1.9V344.4h-1.9ZM657.92 312.0h1.3V315.1h-1.3ZM657.62 309.6h1.9V313.0h-1.9ZM659.53 315.3h1.3V318.0h-1.3ZM659.23 313.0h1.9V316.3h-1.9ZM661.15 318.4h1.3V345.0h-1.3ZM660.85 316.3h1.9V344.0h-1.9ZM662.77 343.6h1.3V344.8h-1.3ZM662.47 344.0h1.9V345.0h-1.9ZM664.38 341.7h1.3V348.7h-1.3ZM664.08 344.5h1.9V347.7h-1.9ZM667.62 330.0h1.3V338.8h-1.3ZM667.32 328.5h1.9V338.8h-1.9ZM670.85 332.3h1.3V345.9h-1.3ZM670.55 332.4h1.9V345.3h-1.9ZM672.47 344.3h1.3V352.5h-1.3ZM672.17 345.3h1.9V351.5h-1.9ZM674.09 351.1h1.3V352.7h-1.3ZM673.79 351.5h1.9V352.5h-1.9ZM678.94 330.0h1.3V351.4h-1.3ZM678.64 331.0h1.9V351.1h-1.9ZM683.79 334.3h1.3V345.1h-1.3ZM683.49 339.2h1.9V343.0h-1.9ZM687.02 340.9h1.3V350.0h-1.3ZM686.72 342.8h1.9V348.0h-1.9ZM688.64 347.7h1.3V354.1h-1.3ZM688.34 348.0h1.9V353.1h-1.9ZM693.49 330.0h1.3V354.6h-1.3ZM693.19 331.0h1.9V353.6h-1.9ZM696.72 330.0h1.3V331.6h-1.3ZM696.42 331.0h1.9V332.0h-1.9ZM699.96 328.9h1.3V332.7h-1.3ZM699.66 330.3h1.9V331.3h-1.9ZM703.19 313.6h1.3V322.0h-1.3ZM702.89 315.7h1.9V318.8h-1.9ZM708.04 310.0h1.3V336.7h-1.3ZM707.74 311.7h1.9V335.7h-1.9ZM709.66 333.8h1.3V337.7h-1.3ZM709.36 335.7h1.9V337.3h-1.9ZM712.89 314.2h1.3V328.5h-1.3ZM712.59 313.4h1.9V327.9h-1.9ZM714.51 326.9h1.3V342.1h-1.3ZM714.21 327.9h1.9V338.7h-1.9ZM716.13 337.9h1.3V338.9h-1.3ZM715.83 338.7h1.9V339.7h-1.9ZM717.74 337.9h1.3V343.4h-1.3ZM717.44 338.9h1.9V343.3h-1.9ZM722.60 332.4h1.3V345.7h-1.3ZM722.30 333.3h1.9V343.2h-1.9ZM725.83 338.1h1.3V345.1h-1.3ZM725.53 339.8h1.9V344.5h-1.9ZM727.45 344.2h1.3V347.2h-1.3ZM727.15 344.5h1.9V347.0h-1.9ZM730.68 338.1h1.3V340.0h-1.3ZM730.38 338.6h1.9V339.6h-1.9ZM732.30 338.3h1.3V349.9h-1.3ZM732.00 339.1h1.9V348.4h-1.9ZM733.91 347.5h1.3V352.6h-1.3ZM733.61 348.4h1.9V352.0h-1.9ZM737.15 339.3h1.3V347.8h-1.3ZM736.85 339.7h1.9V345.5h-1.9ZM738.77 343.8h1.3V348.8h-1.3ZM738.47 345.5h1.9V347.8h-1.9ZM742.00 339.4h1.3V341.4h-1.3ZM741.70 340.2h1.9V341.2h-1.9ZM743.62 340.0h1.3V350.4h-1.3ZM743.32 340.4h1.9V348.6h-1.9ZM746.85 343.1h1.3V350.9h-1.3ZM746.55 344.0h1.9V350.0h-1.9ZM750.08 350.9h1.3V370.8h-1.3ZM749.78 345.5h1.9V369.1h-1.9ZM753.32 357.5h1.3V371.5h-1.3ZM753.02 357.3h1.9V368.4h-1.9ZM754.94 367.5h1.3V387.8h-1.3ZM754.64 368.4h1.9V386.8h-1.9ZM756.55 383.3h1.3V390.4h-1.3ZM756.25 386.8h1.9V389.5h-1.9ZM759.79 362.4h1.3V366.7h-1.3ZM759.49 362.1h1.9V363.4h-1.9ZM761.40 364.1h1.3V382.2h-1.3ZM761.10 363.4h1.9V378.8h-1.9ZM763.02 373.3h1.3V400.9h-1.3ZM762.72 378.8h1.9V399.7h-1.9ZM766.25 385.9h1.3V405.4h-1.3ZM765.95 388.8h1.9V405.2h-1.9ZM769.49 372.1h1.3V398.8h-1.3ZM769.19 371.5h1.9V394.0h-1.9ZM771.11 392.6h1.3V414.0h-1.3ZM770.81 394.0h1.9V413.0h-1.9ZM772.72 411.3h1.3V415.8h-1.3ZM772.42 413.0h1.9V414.8h-1.9ZM777.57 375.0h1.3V396.3h-1.3ZM777.27 378.4h1.9V393.8h-1.9ZM779.19 391.6h1.3V412.8h-1.3ZM778.89 393.8h1.9V411.8h-1.9ZM782.42 386.2h1.3V389.7h-1.3ZM782.12 387.5h1.9V388.5h-1.9ZM784.04 385.8h1.3V399.9h-1.3ZM783.74 387.5h1.9V398.4h-1.9ZM785.66 396.9h1.3V405.5h-1.3ZM785.36 398.4h1.9V404.7h-1.9ZM787.28 404.6h1.3V408.3h-1.3ZM786.98 404.7h1.9V408.0h-1.9ZM792.13 381.0h1.3V383.7h-1.3ZM791.83 380.4h1.9V382.0h-1.9ZM793.74 384.4h1.3V408.0h-1.3ZM793.44 382.0h1.9V407.0h-1.9ZM796.98 392.5h1.3V398.0h-1.3ZM796.68 392.6h1.9V394.8h-1.9ZM798.59 394.3h1.3V399.1h-1.3ZM798.29 394.8h1.9V398.3h-1.9ZM800.21 397.9h1.3V402.2h-1.3ZM799.91 398.3h1.9V402.0h-1.9ZM801.83 401.6h1.3V405.5h-1.3ZM801.53 402.0h1.9V404.9h-1.9ZM811.53 389.7h1.3V402.6h-1.3ZM811.23 390.8h1.9V402.2h-1.9ZM822.85 386.8h1.3V399.8h-1.3ZM822.55 387.0h1.9V398.0h-1.9ZM826.08 386.0h1.3V389.7h-1.3ZM825.78 387.0h1.9V388.0h-1.9ZM827.70 386.0h1.3V411.1h-1.3ZM827.40 387.0h1.9V411.0h-1.9ZM832.55 386.0h1.3V390.3h-1.3ZM832.25 387.0h1.9V388.0h-1.9ZM834.17 386.5h1.3V391.5h-1.3ZM833.87 387.0h1.9V389.4h-1.9ZM837.40 386.1h1.3V388.8h-1.3ZM837.10 387.0h1.9V388.0h-1.9ZM839.02 387.0h1.3V392.3h-1.3ZM838.72 387.0h1.9V388.0h-1.9ZM840.64 386.0h1.3V394.4h-1.3ZM840.34 387.0h1.9V391.6h-1.9ZM843.87 387.5h1.3V412.0h-1.3ZM843.57 389.8h1.9V410.8h-1.9ZM845.49 410.1h1.3V412.8h-1.3ZM845.19 410.8h1.9V411.8h-1.9ZM848.72 398.8h1.3V419.5h-1.3ZM848.42 397.5h1.9V416.6h-1.9ZM851.96 411.2h1.3V443.8h-1.3ZM851.66 408.1h1.9V440.8h-1.9ZM855.19 423.7h1.3V428.2h-1.3ZM854.89 420.3h1.9V426.5h-1.9ZM856.81 429.9h1.3V432.5h-1.3ZM856.51 426.5h1.9V430.9h-1.9ZM858.42 433.7h1.3V448.0h-1.3ZM858.12 430.9h1.9V446.8h-1.9ZM861.66 439.0h1.3V473.3h-1.3ZM861.36 437.4h1.9V470.6h-1.9ZM868.13 454.9h1.3V482.7h-1.3ZM867.83 450.1h1.9V480.7h-1.9ZM871.36 466.5h1.3V516.9h-1.3ZM871.06 461.7h1.9V508.1h-1.9ZM874.59 476.1h1.3V479.6h-1.3ZM874.29 472.7h1.9V477.6h-1.9ZM876.21 480.5h1.3V482.2h-1.3ZM875.91 477.6h1.9V481.5h-1.9ZM877.83 484.9h1.3V550.3h-1.3ZM877.53 481.5h1.9V549.2h-1.9ZM879.44 540.6h1.3V556.0h-1.3ZM879.14 549.2h1.9V555.0h-1.9ZM884.30 506.1h1.3V555.8h-1.3ZM884.00 508.8h1.9V554.8h-1.9ZM887.53 490.7h1.3V502.7h-1.3ZM887.23 491.4h1.9V492.4h-1.9ZM889.15 491.4h1.3V538.4h-1.3ZM888.85 491.7h1.9V525.9h-1.9ZM892.38 522.9h1.3V529.7h-1.3ZM892.08 523.7h1.9V527.9h-1.9ZM895.61 505.0h1.3V554.6h-1.3ZM895.31 506.6h1.9V554.4h-1.9ZM898.85 506.5h1.3V542.1h-1.3ZM898.55 511.6h1.9V535.5h-1.9ZM903.70 494.0h1.3V555.2h-1.3ZM903.40 494.7h1.9V554.2h-1.9ZM908.55 502.2h1.3V555.5h-1.3ZM908.25 510.6h1.9V554.3h-1.9ZM911.78 518.2h1.3V569.9h-1.3ZM911.48 523.5h1.9V564.6h-1.9ZM915.02 544.7h1.3V545.7h-1.3ZM914.72 523.7h1.9V545.7h-1.9ZM916.64 566.7h1.3V573.7h-1.3ZM916.34 545.7h1.9V567.7h-1.9ZM918.25 588.7h1.3V593.8h-1.3ZM917.95 567.7h1.9V589.7h-1.9ZM919.87 602.9h1.3V682.0h-1.3ZM919.57 589.7h1.9V675.2h-1.9ZM924.72 595.8h1.3V665.4h-1.3ZM924.42 613.4h1.9V659.3h-1.9ZM926.34 643.6h1.3V684.0h-1.3ZM926.04 659.3h1.9V677.4h-1.9ZM931.19 583.4h1.3V645.8h-1.3ZM930.89 585.0h1.9V644.8h-1.9ZM936.04 600.1h1.3V630.6h-1.3ZM935.74 602.9h1.9V626.5h-1.9ZM939.27 616.6h1.3V631.4h-1.3ZM938.97 621.6h1.9V630.2h-1.9ZM940.89 626.7h1.3V631.8h-1.3ZM940.59 630.2h1.9V631.2h-1.9ZM948.98 598.3h1.3V633.8h-1.3ZM948.68 600.5h1.9V632.8h-1.9ZM952.21 597.8h1.3V616.4h-1.3ZM951.91 601.5h1.9V610.8h-1.9ZM955.44 596.9h1.3V605.3h-1.3ZM955.14 597.9h1.9V604.7h-1.9ZM957.06 603.7h1.3V623.1h-1.3ZM956.76 604.7h1.9V622.6h-1.9ZM960.29 590.1h1.3V617.6h-1.3ZM959.99 590.2h1.9V616.9h-1.9ZM963.53 596.1h1.3V639.9h-1.3ZM963.23 596.3h1.9V638.9h-1.9ZM966.76 593.7h1.3V595.4h-1.3ZM966.46 593.8h1.9V594.8h-1.9ZM968.38 594.6h1.3V642.7h-1.3ZM968.08 594.7h1.9V642.5h-1.9ZM971.61 633.5h1.3V645.5h-1.3ZM971.31 638.1h1.9V644.9h-1.9ZM976.46 598.9h1.3V624.9h-1.3ZM976.16 599.2h1.9V616.1h-1.9ZM981.32 600.8h1.3V614.6h-1.3ZM981.02 601.1h1.9V612.5h-1.9ZM982.93 612.3h1.3V622.6h-1.3ZM982.63 612.5h1.9V620.6h-1.9ZM984.55 620.1h1.3V622.0h-1.3ZM984.25 620.6h1.9V621.6h-1.9ZM987.78 603.4h1.3V632.5h-1.3ZM987.48 608.7h1.9V627.6h-1.9ZM991.02 603.2h1.3V649.0h-1.3ZM990.72 605.0h1.9V648.0h-1.9ZM995.87 610.0h1.3V632.0h-1.3ZM995.57 615.0h1.9V625.0h-1.9ZM999.10 604.0h1.3V620.0h-1.3ZM998.80 608.0h1.9V616.0h-1.9ZM1003.95 586.0h1.3V605.0h-1.3ZM1003.65 590.0h1.9V596.0h-1.9ZM1008.80 560.0h1.3V590.0h-1.3ZM1008.50 566.0h1.9V572.0h-1.9ZM1015.27 494.0h1.3V563.0h-1.3ZM1014.97 505.0h1.9V540.0h-1.9ZM1016.89 525.0h1.3V565.0h-1.3ZM1016.59 540.0h1.9V560.0h-1.9ZM1018.51 555.0h1.3V593.0h-1.3ZM1018.21 560.0h1.9V585.0h-1.9ZM1021.74 574.0h1.3V594.0h-1.3ZM1021.44 576.0h1.9V588.0h-1.9ZM142.20 268.0h1.6V331.0h-1.6ZM213.70 274.0h1.6V320.0h-1.6ZM273.70 300.0h1.6V353.0h-1.6ZM408.70 355.0h1.6V385.0h-1.6ZM433.90 372.6h1.6V410.0h-1.6ZM630.20 250.0h1.6V298.6h-1.6ZM747.70 340.0h1.6V423.5h-1.6ZM814.20 395.0h1.6V437.4h-1.6ZM871.60 495.0h1.6V567.0h-1.6ZM919.20 591.0h1.6V722.0h-1.6ZM957.20 590.0h1.6V630.0h-1.6Z" fill="#f23645"/>
<path d="M14.35 264.0h1.3V271.7h-1.3ZM14.05 265.6h1.9V271.0h-1.9ZM15.97 258.1h1.3V266.4h-1.3ZM15.67 261.6h1.9V265.6h-1.9ZM19.20 296.0h1.3V302.0h-1.3ZM18.90 297.9h1.9V301.1h-1.9ZM20.82 242.7h1.3V300.4h-1.3ZM20.52 243.7h1.9V297.9h-1.9ZM24.05 241.2h1.3V275.5h-1.3ZM23.75 243.5h1.9V274.1h-1.9ZM30.52 262.1h1.3V300.0h-1.3ZM30.22 265.5h1.9V299.0h-1.9ZM32.14 261.7h1.3V266.6h-1.3ZM31.84 264.5h1.9V265.5h-1.9ZM33.75 253.5h1.3V266.7h-1.3ZM33.45 257.5h1.9V264.5h-1.9ZM40.22 295.7h1.3V313.0h-1.3ZM39.92 298.6h1.9V312.0h-1.9ZM41.84 287.8h1.3V301.4h-1.3ZM41.54 292.8h1.9V298.6h-1.9ZM45.07 306.3h1.3V311.3h-1.3ZM44.77 306.7h1.9V307.7h-1.9ZM46.69 293.3h1.3V296.3h-1.3ZM46.39 295.3h1.9V306.7h-1.9ZM48.31 253.5h1.3V288.0h-1.3ZM48.01 256.4h1.9V295.3h-1.9ZM51.54 278.1h1.3V288.0h-1.3ZM51.24 282.3h1.9V287.0h-1.9ZM53.16 248.6h1.3V283.4h-1.3ZM52.86 249.6h1.9V282.3h-1.9ZM62.86 249.7h1.3V288.0h-1.3ZM62.56 250.7h1.9V287.0h-1.9ZM66.09 245.4h1.3V252.6h-1.3ZM65.79 246.4h1.9V250.9h-1.9ZM70.94 232.2h1.3V251.8h-1.3ZM70.64 235.2h1.9V251.7h-1.9ZM72.56 212.6h1.3V235.7h-1.3ZM72.26 214.8h1.9V235.2h-1.9ZM74.18 203.8h1.3V215.0h-1.3ZM73.88 206.0h1.9V214.8h-1.9ZM75.80 203.1h1.3V208.1h-1.3ZM75.50 203.6h1.9V206.0h-1.9ZM77.41 193.2h1.3V205.5h-1.3ZM77.11 194.2h1.9V203.6h-1.9ZM79.03 192.2h1.3V195.9h-1.3ZM78.73 193.2h1.9V194.2h-1.9ZM87.12 246.7h1.3V250.0h-1.3ZM86.82 248.4h1.9V249.4h-1.9ZM88.73 237.2h1.3V249.7h-1.3ZM88.43 240.8h1.9V248.4h-1.9ZM91.97 211.9h1.3V250.4h-1.3ZM91.67 212.8h1.9V248.9h-1.9ZM98.43 222.8h1.3V233.9h-1.3ZM98.13 222.9h1.9V232.7h-1.9ZM100.05 212.4h1.3V225.2h-1.3ZM99.75 214.5h1.9V222.9h-1.9ZM104.90 218.2h1.3V227.4h-1.3ZM104.60 219.1h1.9V228.1h-1.9ZM106.52 212.3h1.3V221.8h-1.3ZM106.22 213.3h1.9V219.1h-1.9ZM116.22 257.7h1.3V272.8h-1.3ZM115.92 258.1h1.9V270.8h-1.9ZM119.46 241.8h1.3V265.4h-1.3ZM119.16 242.8h1.9V262.6h-1.9ZM124.31 267.1h1.3V273.4h-1.3ZM124.01 270.5h1.9V271.5h-1.9ZM130.77 295.2h1.3V300.3h-1.3ZM130.47 296.4h1.9V297.4h-1.9ZM132.39 264.9h1.3V301.0h-1.3ZM132.09 268.4h1.9V296.4h-1.9ZM138.86 287.0h1.3V312.2h-1.3ZM138.56 292.8h1.9V309.6h-1.9ZM143.71 304.9h1.3V319.9h-1.3ZM143.41 307.8h1.9V315.8h-1.9ZM146.94 289.4h1.3V324.9h-1.3ZM146.64 290.4h1.9V322.0h-1.9ZM150.18 311.1h1.3V320.5h-1.3ZM149.88 311.2h1.9V318.9h-1.9ZM155.03 296.3h1.3V328.1h-1.3ZM154.73 297.3h1.9V325.0h-1.9ZM161.50 309.8h1.3V327.6h-1.3ZM161.20 312.5h1.9V326.0h-1.9ZM163.11 307.5h1.3V316.7h-1.3ZM162.81 308.5h1.9V312.5h-1.9ZM166.35 314.1h1.3V318.2h-1.3ZM166.05 315.0h1.9V316.5h-1.9ZM177.67 355.5h1.3V378.0h-1.3ZM177.37 361.8h1.9V372.3h-1.9ZM184.13 394.4h1.3V407.6h-1.3ZM183.83 395.2h1.9V406.2h-1.9ZM185.75 390.5h1.3V398.1h-1.3ZM185.45 391.1h1.9V395.2h-1.9ZM187.37 379.8h1.3V391.4h-1.3ZM187.07 382.3h1.9V391.1h-1.9ZM188.99 366.7h1.3V389.9h-1.3ZM188.69 367.8h1.9V382.3h-1.9ZM193.84 400.0h1.3V401.6h-1.3ZM193.54 400.2h1.9V401.6h-1.9ZM195.45 360.8h1.3V400.6h-1.3ZM195.15 361.8h1.9V400.2h-1.9ZM197.07 357.6h1.3V367.1h-1.3ZM196.77 358.6h1.9V361.8h-1.9ZM198.69 352.1h1.3V359.4h-1.3ZM198.39 353.1h1.9V358.6h-1.9ZM203.54 337.6h1.3V365.9h-1.3ZM203.24 341.4h1.9V372.5h-1.9ZM206.77 347.8h1.3V356.1h-1.3ZM206.47 353.4h1.9V359.0h-1.9ZM208.39 340.5h1.3V352.1h-1.3ZM208.09 342.0h1.9V353.4h-1.9ZM210.01 330.5h1.3V343.2h-1.3ZM209.71 331.9h1.9V342.0h-1.9ZM213.24 339.1h1.3V340.3h-1.3ZM212.94 339.3h1.9V341.2h-1.9ZM214.86 311.0h1.3V335.5h-1.3ZM214.56 311.0h1.9V339.3h-1.9ZM218.09 303.2h1.3V314.7h-1.3ZM217.79 306.9h1.9V313.4h-1.9ZM221.33 312.7h1.3V316.1h-1.3ZM221.03 315.1h1.9V319.9h-1.9ZM222.94 305.9h1.3V315.9h-1.3ZM222.64 308.2h1.9V315.1h-1.9ZM224.56 282.6h1.3V310.8h-1.3ZM224.26 285.7h1.9V308.2h-1.9ZM227.79 292.7h1.3V315.4h-1.3ZM227.49 294.0h1.9V314.6h-1.9ZM231.03 297.0h1.3V303.4h-1.3ZM230.73 298.5h1.9V299.5h-1.9ZM234.26 301.7h1.3V314.8h-1.3ZM233.96 303.6h1.9V314.0h-1.9ZM237.50 295.7h1.3V314.6h-1.3ZM237.20 302.2h1.9V313.7h-1.9ZM239.11 296.0h1.3V308.7h-1.3ZM238.81 296.2h1.9V302.2h-1.9ZM240.73 288.8h1.3V298.7h-1.3ZM240.43 291.0h1.9V296.2h-1.9ZM245.58 298.1h1.3V303.0h-1.3ZM245.28 300.1h1.9V301.7h-1.9ZM250.43 302.7h1.3V310.8h-1.3ZM250.13 305.3h1.9V310.0h-1.9ZM252.05 290.1h1.3V306.2h-1.3ZM251.75 291.1h1.9V305.3h-1.9ZM255.28 290.8h1.3V303.1h-1.3ZM254.98 291.8h1.9V302.3h-1.9ZM258.52 291.4h1.3V309.5h-1.3ZM258.22 292.4h1.9V308.1h-1.9ZM268.22 300.7h1.3V312.0h-1.3ZM267.92 302.1h1.9V311.0h-1.9ZM269.84 301.7h1.3V302.8h-1.3ZM269.54 301.7h1.9V302.7h-1.9ZM271.45 294.5h1.3V301.8h-1.3ZM271.15 295.5h1.9V301.7h-1.9ZM284.39 348.0h1.3V359.1h-1.3ZM284.09 348.2h1.9V358.9h-1.9ZM287.62 332.7h1.3V354.8h-1.3ZM287.32 333.5h1.9V363.6h-1.9ZM289.24 308.2h1.3V331.6h-1.3ZM288.94 308.5h1.9V333.5h-1.9ZM294.09 319.6h1.3V327.6h-1.3ZM293.79 322.1h1.9V327.4h-1.9ZM295.71 306.0h1.3V323.3h-1.3ZM295.41 306.6h1.9V322.1h-1.9ZM298.94 322.2h1.3V325.2h-1.3ZM298.64 324.2h1.9V325.2h-1.9ZM300.56 314.2h1.3V324.4h-1.3ZM300.26 315.3h1.9V324.2h-1.9ZM303.79 321.3h1.3V322.6h-1.3ZM303.49 321.8h1.9V322.8h-1.9ZM305.41 320.9h1.3V322.0h-1.3ZM305.11 321.0h1.9V322.0h-1.9ZM307.03 316.8h1.3V321.2h-1.3ZM306.73 317.9h1.9V321.0h-1.9ZM308.64 300.6h1.3V321.4h-1.3ZM308.34 304.2h1.9V317.9h-1.9ZM313.50 321.6h1.3V338.2h-1.3ZM313.19 323.3h1.9V336.4h-1.9ZM321.58 337.7h1.3V355.3h-1.3ZM321.28 337.8h1.9V353.0h-1.9ZM324.81 333.6h1.3V357.9h-1.3ZM324.51 334.6h1.9V355.7h-1.9ZM336.13 342.5h1.3V362.6h-1.3ZM335.83 344.6h1.9V361.8h-1.9ZM342.60 356.2h1.3V362.6h-1.3ZM342.30 356.6h1.9V362.9h-1.9ZM344.22 344.3h1.3V356.8h-1.3ZM343.92 345.3h1.9V356.6h-1.9ZM347.45 345.8h1.3V357.1h-1.3ZM347.15 348.4h1.9V356.9h-1.9ZM350.69 353.1h1.3V354.8h-1.3ZM350.39 353.8h1.9V354.8h-1.9ZM352.30 341.2h1.3V353.9h-1.3ZM352.00 344.5h1.9V353.8h-1.9ZM357.15 351.7h1.3V353.5h-1.3ZM356.85 353.0h1.9V354.0h-1.9ZM358.77 340.2h1.3V353.7h-1.3ZM358.47 343.6h1.9V353.0h-1.9ZM362.01 341.7h1.3V353.3h-1.3ZM361.71 345.6h1.9V352.5h-1.9ZM365.24 344.6h1.3V352.9h-1.3ZM364.94 345.6h1.9V352.1h-1.9ZM366.86 335.6h1.3V348.8h-1.3ZM366.56 336.0h1.9V345.6h-1.9ZM373.32 351.5h1.3V361.1h-1.3ZM373.02 353.0h1.9V360.0h-1.9ZM378.18 361.6h1.3V369.3h-1.3ZM377.88 362.7h1.9V368.3h-1.9ZM379.79 361.3h1.3V363.5h-1.3ZM379.49 361.5h1.9V362.7h-1.9ZM386.26 370.5h1.3V380.4h-1.3ZM385.96 370.9h1.9V378.9h-1.9ZM387.88 367.0h1.3V371.8h-1.3ZM387.58 368.5h1.9V370.9h-1.9ZM389.49 350.5h1.3V368.6h-1.3ZM389.19 351.5h1.9V368.5h-1.9ZM392.73 359.2h1.3V364.2h-1.3ZM392.43 360.6h1.9V363.1h-1.9ZM394.35 351.2h1.3V360.7h-1.3ZM394.05 352.2h1.9V360.6h-1.9ZM397.58 359.4h1.3V377.7h-1.3ZM397.28 360.2h1.9V373.7h-1.9ZM399.20 352.0h1.3V361.8h-1.3ZM398.90 353.0h1.9V360.2h-1.9ZM402.43 354.7h1.3V363.1h-1.3ZM402.13 355.7h1.9V361.6h-1.9ZM408.90 365.1h1.3V384.1h-1.3ZM408.60 373.2h1.9V382.2h-1.9ZM410.52 367.3h1.3V378.1h-1.3ZM410.22 369.4h1.9V373.2h-1.9ZM413.75 364.5h1.3V375.2h-1.3ZM413.45 365.5h1.9V373.8h-1.9ZM425.07 415.2h1.3V421.0h-1.3ZM424.77 415.6h1.9V420.0h-1.9ZM428.30 418.1h1.3V421.0h-1.3ZM428.00 418.2h1.9V420.0h-1.9ZM429.92 406.9h1.3V421.0h-1.3ZM429.62 407.0h1.9V418.2h-1.9ZM431.54 399.7h1.3V409.8h-1.3ZM431.24 401.1h1.9V407.0h-1.9ZM433.15 399.2h1.3V404.3h-1.3ZM432.85 399.5h1.9V401.1h-1.9ZM441.24 414.7h1.3V439.1h-1.3ZM440.94 416.3h1.9V435.8h-1.9ZM446.09 407.1h1.3V437.1h-1.3ZM445.79 408.1h1.9V435.7h-1.9ZM455.79 424.0h1.3V427.3h-1.3ZM455.49 426.3h1.9V430.9h-1.9ZM457.41 408.8h1.3V422.7h-1.3ZM457.11 411.5h1.9V426.3h-1.9ZM460.64 404.7h1.3V418.4h-1.3ZM460.34 409.6h1.9V418.5h-1.9ZM462.26 396.9h1.3V411.4h-1.3ZM461.96 398.0h1.9V409.6h-1.9ZM463.88 384.2h1.3V398.2h-1.3ZM463.58 385.1h1.9V398.0h-1.9ZM465.49 384.8h1.3V386.9h-1.3ZM465.19 384.9h1.9V385.9h-1.9ZM468.73 392.3h1.3V412.9h-1.3ZM468.43 397.8h1.9V409.8h-1.9ZM470.34 387.2h1.3V398.9h-1.3ZM470.04 387.2h1.9V397.8h-1.9ZM471.96 382.9h1.3V387.3h-1.3ZM471.66 383.9h1.9V387.2h-1.9ZM473.58 383.0h1.3V386.3h-1.3ZM473.28 383.6h1.9V384.6h-1.9ZM475.20 382.3h1.3V384.0h-1.3ZM474.90 383.3h1.9V384.3h-1.9ZM478.43 391.0h1.3V395.8h-1.3ZM478.13 392.7h1.9V395.0h-1.9ZM483.28 390.8h1.3V412.3h-1.3ZM482.98 392.4h1.9V411.9h-1.9ZM486.51 405.6h1.3V411.3h-1.3ZM486.21 408.2h1.9V410.6h-1.9ZM488.13 400.3h1.3V408.3h-1.3ZM487.83 401.9h1.9V408.2h-1.9ZM497.83 427.4h1.3V430.0h-1.3ZM497.53 428.8h1.9V429.8h-1.9ZM499.45 416.7h1.3V429.9h-1.3ZM499.15 418.7h1.9V428.8h-1.9ZM502.68 418.0h1.3V427.8h-1.3ZM502.38 418.8h1.9V427.7h-1.9ZM504.30 408.7h1.3V418.9h-1.3ZM504.00 411.9h1.9V418.8h-1.9ZM505.92 408.8h1.3V414.7h-1.3ZM505.62 409.8h1.9V411.9h-1.9ZM510.77 409.1h1.3V429.7h-1.3ZM510.47 410.1h1.9V429.0h-1.9ZM517.24 410.6h1.3V428.4h-1.3ZM516.94 410.8h1.9V427.7h-1.9ZM520.47 422.1h1.3V427.7h-1.3ZM520.17 423.4h1.9V427.1h-1.9ZM523.71 417.9h1.3V428.0h-1.3ZM523.41 418.1h1.9V427.0h-1.9ZM525.32 409.5h1.3V418.5h-1.3ZM525.02 410.5h1.9V418.1h-1.9ZM526.94 410.1h1.3V411.9h-1.3ZM526.64 410.4h1.9V411.4h-1.9ZM528.56 410.1h1.3V411.2h-1.3ZM528.26 410.3h1.9V411.3h-1.9ZM533.41 419.7h1.3V427.6h-1.3ZM533.11 420.1h1.9V427.0h-1.9ZM535.02 408.7h1.3V420.9h-1.3ZM534.72 409.7h1.9V420.1h-1.9ZM536.64 408.6h1.3V410.7h-1.3ZM536.34 409.6h1.9V410.6h-1.9ZM538.26 408.5h1.3V411.1h-1.3ZM537.96 409.5h1.9V410.5h-1.9ZM541.49 410.4h1.3V417.5h-1.3ZM541.19 410.5h1.9V417.3h-1.9ZM543.11 408.2h1.3V410.7h-1.3ZM542.81 409.1h1.9V410.5h-1.9ZM544.73 408.9h1.3V410.2h-1.3ZM544.43 409.1h1.9V410.1h-1.9ZM547.96 417.0h1.3V421.7h-1.3ZM547.66 417.0h1.9V421.3h-1.9ZM549.58 414.5h1.3V419.6h-1.3ZM549.28 414.7h1.9V417.0h-1.9ZM551.19 413.5h1.3V416.2h-1.3ZM550.89 413.5h1.9V414.7h-1.9ZM556.05 409.6h1.3V429.6h-1.3ZM555.75 410.6h1.9V428.3h-1.9ZM562.51 414.8h1.3V425.8h-1.3ZM562.21 415.9h1.9V425.0h-1.9ZM565.75 419.0h1.3V421.5h-1.3ZM565.45 419.3h1.9V420.3h-1.9ZM567.36 408.3h1.3V420.5h-1.3ZM567.06 408.4h1.9V419.3h-1.9ZM570.60 405.3h1.3V417.1h-1.3ZM570.30 406.3h1.9V415.4h-1.9ZM573.83 412.3h1.3V429.8h-1.3ZM573.53 413.9h1.9V430.2h-1.9ZM575.45 398.3h1.3V416.1h-1.3ZM575.15 399.9h1.9V413.9h-1.9ZM578.68 405.3h1.3V425.6h-1.3ZM578.38 405.8h1.9V426.0h-1.9ZM581.92 415.6h1.3V417.9h-1.3ZM581.62 416.9h1.9V421.4h-1.9ZM583.53 406.9h1.3V413.5h-1.3ZM583.23 407.6h1.9V416.9h-1.9ZM585.15 387.3h1.3V409.0h-1.3ZM584.85 391.2h1.9V407.6h-1.9ZM586.77 377.2h1.3V391.3h-1.3ZM586.47 378.2h1.9V391.2h-1.9ZM590.00 372.0h1.3V387.3h-1.3ZM589.70 373.3h1.9V383.3h-1.9ZM593.24 373.4h1.3V376.1h-1.3ZM592.94 373.7h1.9V374.7h-1.9ZM594.85 371.9h1.3V374.8h-1.3ZM594.55 373.3h1.9V374.3h-1.9ZM598.09 363.6h1.3V375.4h-1.3ZM597.79 365.2h1.9V373.9h-1.9ZM601.32 370.0h1.3V373.4h-1.3ZM601.02 372.4h1.9V374.5h-1.9ZM602.94 367.6h1.3V371.2h-1.3ZM602.64 370.2h1.9V372.4h-1.9ZM604.56 365.1h1.3V369.1h-1.3ZM604.25 368.1h1.9V370.2h-1.9ZM606.17 347.5h1.3V366.9h-1.3ZM605.87 348.3h1.9V368.1h-1.9ZM607.79 335.9h1.3V349.6h-1.3ZM607.49 336.9h1.9V348.3h-1.9ZM614.26 345.3h1.3V350.9h-1.3ZM613.96 346.5h1.9V355.0h-1.9ZM615.87 341.7h1.3V345.9h-1.3ZM615.57 344.9h1.9V346.5h-1.9ZM617.49 332.7h1.3V340.8h-1.3ZM617.19 333.3h1.9V344.9h-1.9ZM619.11 318.4h1.3V335.8h-1.3ZM618.81 320.5h1.9V333.3h-1.9ZM620.72 312.4h1.3V314.4h-1.3ZM620.42 313.4h1.9V320.5h-1.9ZM622.34 288.8h1.3V290.1h-1.3ZM622.04 289.1h1.9V313.4h-1.9ZM623.96 250.0h1.3V285.4h-1.3ZM623.66 250.1h1.9V289.1h-1.9ZM628.81 243.1h1.3V262.7h-1.3ZM628.51 247.6h1.9V262.2h-1.9ZM630.43 242.7h1.3V248.5h-1.3ZM630.13 243.7h1.9V247.6h-1.9ZM635.28 288.1h1.3V290.7h-1.3ZM634.98 288.4h1.9V290.6h-1.9ZM638.51 293.4h1.3V303.7h-1.3ZM638.21 296.1h1.9V301.6h-1.9ZM640.13 282.3h1.3V303.3h-1.3ZM639.83 282.8h1.9V296.1h-1.9ZM641.75 277.9h1.3V287.8h-1.3ZM641.45 278.9h1.9V282.8h-1.9ZM651.45 339.0h1.3V345.0h-1.3ZM651.15 344.0h1.9V345.0h-1.9ZM653.06 342.5h1.3V344.1h-1.3ZM652.76 343.4h1.9V344.4h-1.9ZM654.68 320.5h1.3V344.2h-1.3ZM654.38 324.3h1.9V343.4h-1.9ZM656.30 308.6h1.3V325.7h-1.3ZM656.00 309.6h1.9V324.3h-1.9ZM666.00 327.5h1.3V348.7h-1.3ZM665.70 328.5h1.9V347.7h-1.9ZM669.23 331.7h1.3V340.4h-1.3ZM668.93 332.4h1.9V338.8h-1.9ZM675.70 332.1h1.3V352.0h-1.3ZM675.40 333.8h1.9V351.7h-1.9ZM677.32 330.0h1.3V335.3h-1.3ZM677.02 331.0h1.9V333.8h-1.9ZM680.55 349.1h1.3V351.6h-1.3ZM680.25 349.7h1.9V351.1h-1.9ZM682.17 338.0h1.3V349.7h-1.3ZM681.87 339.2h1.9V349.7h-1.9ZM685.40 339.7h1.3V343.2h-1.3ZM685.10 342.8h1.9V343.8h-1.9ZM690.26 344.6h1.3V353.8h-1.3ZM689.96 345.9h1.9V353.1h-1.9ZM691.87 330.0h1.3V347.5h-1.3ZM691.57 331.0h1.9V345.9h-1.9ZM695.11 330.0h1.3V354.8h-1.3ZM694.81 331.0h1.9V353.6h-1.9ZM698.34 330.0h1.3V331.3h-1.3ZM698.04 330.3h1.9V331.3h-1.9ZM701.57 312.9h1.3V330.2h-1.3ZM701.27 315.7h1.9V330.9h-1.9ZM704.81 315.3h1.3V321.7h-1.3ZM704.51 315.3h1.9V318.8h-1.9ZM706.43 310.3h1.3V317.5h-1.3ZM706.13 311.7h1.9V315.3h-1.9ZM711.28 311.9h1.3V338.9h-1.3ZM710.98 313.4h1.9V337.3h-1.9ZM719.36 334.6h1.3V345.3h-1.3ZM719.06 335.5h1.9V343.3h-1.9ZM720.98 330.1h1.3V337.9h-1.3ZM720.68 333.3h1.9V335.5h-1.9ZM724.21 339.6h1.3V344.6h-1.3ZM723.91 339.8h1.9V343.2h-1.9ZM729.06 337.6h1.3V347.4h-1.3ZM728.76 338.6h1.9V347.0h-1.9ZM735.53 338.9h1.3V352.7h-1.3ZM735.23 339.7h1.9V352.0h-1.9ZM740.38 339.4h1.3V348.8h-1.3ZM740.08 340.2h1.9V347.8h-1.9ZM745.23 343.4h1.3V349.7h-1.3ZM744.93 344.0h1.9V348.6h-1.9ZM748.47 344.5h1.3V350.9h-1.3ZM748.17 345.5h1.9V350.0h-1.9ZM751.70 356.9h1.3V371.5h-1.3ZM751.40 357.3h1.9V369.1h-1.9ZM758.17 361.9h1.3V390.8h-1.3ZM757.87 362.1h1.9V389.5h-1.9ZM764.64 388.0h1.3V400.1h-1.3ZM764.34 388.8h1.9V399.7h-1.9ZM767.87 370.5h1.3V406.5h-1.3ZM767.57 371.5h1.9V405.2h-1.9ZM774.34 410.3h1.3V415.1h-1.3ZM774.04 414.1h1.9V415.1h-1.9ZM775.96 375.0h1.3V414.3h-1.3ZM775.66 378.4h1.9V414.1h-1.9ZM780.81 387.0h1.3V412.0h-1.3ZM780.51 387.5h1.9V411.8h-1.9ZM788.89 406.3h1.3V408.2h-1.3ZM788.59 407.2h1.9V408.2h-1.9ZM790.51 379.0h1.3V408.0h-1.3ZM790.21 380.4h1.9V407.2h-1.9ZM795.36 390.8h1.3V408.0h-1.3ZM795.06 392.6h1.9V407.0h-1.9ZM803.45 403.3h1.3V405.3h-1.3ZM803.15 404.3h1.9V405.3h-1.9ZM805.06 402.9h1.3V405.3h-1.3ZM804.76 404.3h1.9V405.3h-1.9ZM806.68 391.6h1.3V404.8h-1.3ZM806.38 393.7h1.9V404.3h-1.9ZM808.30 390.8h1.3V395.4h-1.3ZM808.00 391.4h1.9V393.7h-1.9ZM809.91 390.4h1.3V394.0h-1.3ZM809.61 390.8h1.9V391.8h-1.9ZM813.15 400.2h1.3V402.8h-1.3ZM812.85 401.1h1.9V402.2h-1.9ZM814.76 399.2h1.3V401.3h-1.3ZM814.46 400.1h1.9V401.1h-1.9ZM816.38 388.1h1.3V403.5h-1.3ZM816.08 388.2h1.9V400.1h-1.9ZM818.00 386.5h1.3V388.3h-1.3ZM817.70 387.5h1.9V388.5h-1.9ZM819.62 386.5h1.3V389.4h-1.3ZM819.32 387.0h1.9V388.0h-1.9ZM821.23 386.0h1.3V388.4h-1.3ZM820.93 387.0h1.9V388.0h-1.9ZM824.47 386.0h1.3V398.5h-1.3ZM824.17 387.0h1.9V398.0h-1.9ZM829.32 407.4h1.3V411.5h-1.3ZM829.02 407.7h1.9V411.0h-1.9ZM830.93 386.0h1.3V411.0h-1.3ZM830.63 387.0h1.9V407.7h-1.9ZM835.79 386.0h1.3V390.2h-1.3ZM835.49 387.0h1.9V389.4h-1.9ZM842.25 388.3h1.3V392.4h-1.3ZM841.95 389.8h1.9V391.6h-1.9ZM847.10 395.7h1.3V412.3h-1.3ZM846.80 397.5h1.9V411.8h-1.9ZM850.34 405.6h1.3V420.4h-1.3ZM850.04 408.1h1.9V416.6h-1.9ZM853.57 419.0h1.3V444.6h-1.3ZM853.27 420.3h1.9V440.8h-1.9ZM860.04 436.4h1.3V449.8h-1.3ZM859.74 437.4h1.9V446.8h-1.9ZM863.27 460.2h1.3V474.5h-1.3ZM862.97 461.5h1.9V470.6h-1.9ZM864.89 450.5h1.3V467.5h-1.3ZM864.59 454.5h1.9V461.5h-1.9ZM866.51 449.1h1.3V456.3h-1.3ZM866.21 450.1h1.9V454.5h-1.9ZM869.74 460.7h1.3V483.0h-1.3ZM869.44 461.7h1.9V480.7h-1.9ZM872.98 471.7h1.3V508.7h-1.3ZM872.68 472.7h1.9V508.1h-1.9ZM881.06 542.5h1.3V555.7h-1.3ZM880.76 543.2h1.9V555.0h-1.9ZM882.68 508.4h1.3V546.4h-1.3ZM882.38 508.8h1.9V543.2h-1.9ZM885.91 491.1h1.3V555.8h-1.3ZM885.61 491.4h1.9V554.8h-1.9ZM890.76 523.0h1.3V532.9h-1.3ZM890.46 523.7h1.9V525.9h-1.9ZM894.00 499.5h1.3V532.7h-1.3ZM893.70 506.6h1.9V527.9h-1.9ZM897.23 507.1h1.3V555.4h-1.3ZM896.93 511.6h1.9V554.4h-1.9ZM900.47 495.8h1.3V538.8h-1.3ZM900.17 500.8h1.9V535.5h-1.9ZM902.08 493.7h1.3V506.1h-1.3ZM901.78 494.7h1.9V500.8h-1.9ZM905.32 517.7h1.3V555.1h-1.3ZM905.02 529.2h1.9V554.2h-1.9ZM906.93 502.5h1.3V532.2h-1.3ZM906.63 510.6h1.9V529.2h-1.9ZM910.17 521.1h1.3V563.2h-1.3ZM909.87 523.5h1.9V554.3h-1.9ZM913.40 522.7h1.3V566.1h-1.3ZM913.10 523.7h1.9V564.6h-1.9ZM921.49 645.2h1.3V690.7h-1.3ZM921.19 656.6h1.9V675.2h-1.9ZM923.10 612.4h1.3V659.2h-1.3ZM922.80 613.4h1.9V656.6h-1.9ZM927.95 615.2h1.3V669.6h-1.3ZM927.65 625.7h1.9V677.4h-1.9ZM929.57 583.9h1.3V626.1h-1.3ZM929.27 585.0h1.9V625.7h-1.9ZM932.81 629.1h1.3V634.0h-1.3ZM932.51 633.0h1.9V644.8h-1.9ZM934.42 596.3h1.3V630.3h-1.3ZM934.12 602.9h1.9V633.0h-1.9ZM937.66 620.7h1.3V628.6h-1.3ZM937.36 621.6h1.9V626.5h-1.9ZM942.51 623.1h1.3V632.2h-1.3ZM942.21 624.0h1.9V630.8h-1.9ZM944.12 612.2h1.3V627.0h-1.3ZM943.82 616.1h1.9V624.0h-1.9ZM945.74 614.0h1.3V618.8h-1.3ZM945.44 616.0h1.9V617.0h-1.9ZM947.36 599.8h1.3V616.1h-1.3ZM947.06 600.5h1.9V616.0h-1.9ZM950.59 599.0h1.3V633.9h-1.3ZM950.29 601.5h1.9V632.8h-1.9ZM953.83 594.1h1.3V619.0h-1.3ZM953.53 597.9h1.9V610.8h-1.9ZM958.68 589.2h1.3V630.8h-1.3ZM958.38 590.2h1.9V622.6h-1.9ZM961.91 594.2h1.3V623.5h-1.3ZM961.61 596.3h1.9V616.9h-1.9ZM965.15 592.8h1.3V640.6h-1.3ZM964.85 593.8h1.9V638.9h-1.9ZM970.00 638.0h1.3V644.7h-1.3ZM969.70 638.1h1.9V642.5h-1.9ZM973.23 625.7h1.3V647.2h-1.3ZM972.93 627.0h1.9V644.9h-1.9ZM974.85 598.2h1.3V629.0h-1.3ZM974.55 599.2h1.9V627.0h-1.9ZM978.08 608.1h1.3V621.3h-1.3ZM977.78 610.9h1.9V616.1h-1.9ZM979.70 600.1h1.3V612.9h-1.3ZM979.40 601.1h1.9V610.9h-1.9ZM986.17 602.7h1.3V623.3h-1.3ZM985.87 608.7h1.9V621.5h-1.9ZM989.40 604.0h1.3V630.5h-1.3ZM989.10 605.0h1.9V627.6h-1.9ZM992.63 606.7h1.3V647.9h-1.3ZM992.33 609.7h1.9V648.0h-1.9ZM994.25 605.0h1.3V640.0h-1.3ZM993.95 615.0h1.9V630.0h-1.9ZM997.49 603.0h1.3V630.0h-1.3ZM997.19 608.0h1.9V625.0h-1.9ZM1000.72 596.0h1.3V619.0h-1.3ZM1000.42 600.0h1.9V616.0h-1.9ZM1002.34 582.0h1.3V612.0h-1.3ZM1002.04 590.0h1.9V600.0h-1.9ZM1005.57 575.0h1.3V598.0h-1.3ZM1005.27 580.0h1.9V596.0h-1.9ZM1007.19 560.0h1.3V585.0h-1.3ZM1006.89 566.0h1.9V580.0h-1.9ZM1010.42 545.0h1.3V575.0h-1.3ZM1010.12 552.0h1.9V572.0h-1.9ZM1012.04 535.0h1.3V569.0h-1.3ZM1011.74 540.0h1.9V552.0h-1.9ZM1013.66 494.0h1.3V561.0h-1.3ZM1013.36 505.0h1.9V540.0h-1.9ZM1020.12 572.0h1.3V594.0h-1.3ZM1019.82 576.0h1.9V585.0h-1.9ZM21.20 290.0h1.6V345.0h-1.6ZM181.70 380.0h1.6V434.0h-1.6ZM249.70 277.0h1.6V305.0h-1.6ZM289.50 312.0h1.6V370.0h-1.6ZM357.20 308.0h1.6V340.0h-1.6ZM446.70 400.0h1.6V453.0h-1.6ZM572.20 410.0h1.6V436.6h-1.6ZM623.70 235.0h1.6V270.0h-1.6ZM699.00 304.5h1.6V340.0h-1.6ZM922.70 624.0h1.6V774.0h-1.6ZM928.20 548.6h1.6V640.0h-1.6Z" fill="#089981"/>
<path d="M15 588.5H1509" stroke="#9575cd" stroke-width="1.5" stroke-dasharray="1.5 3" fill="none"/>
<rect x="255.6" y="635.5" width="1105.8" height="14" fill="#4caf50" fill-opacity="0.2" stroke="#4caf50" stroke-width="1.7"/>
<line x1="478.75" y1="147.8" x2="1241.8" y2="643.7" stroke="#f2d636" stroke-width="1.8" stroke-linecap="round"/>
</g>
<circle cx="1023" cy="792" r="13.3" fill="none" stroke="#b54fcc" stroke-width="2.8"/>
<path d="M1027.8 784.6L1017.2 792.6L1023.2 792.4L1018.6 799.4L1029.2 791.2L1023.2 791.4Z" fill="#b54fcc" stroke="#b54fcc" stroke-width="1" stroke-linejoin="round"/>
<g clip-path="url(#rsiclip)">
<rect x="15" y="856" width="1494" height="60" fill="#1a1722"/>
<path d="M15 841.5H1509M15 900.5H1509M274.5 856V916M575.5 856V916M876.5 856V916M1147.5 856V916M1448.5 856V916" stroke="#1d1d1d" stroke-width="1" fill="none"/>
<path d="M15 856.5H1509M15 886H1509M15 916H1509" stroke="#7b7b80" stroke-width="1.5" stroke-dasharray="7 8.5" fill="none"/>
<polygon points="14.0,856.0 14.0,856.0 15.3,856.0 17.8,856.0 19.8,856.0 21.9,856.0 23.2,856.0 25.3,856.0 26.5,856.0 28.4,856.0 30.4,856.0 32.3,856.0 34.4,856.0 36.5,856.0 37.4,856.0 39.0,856.0 40.7,856.0 43.2,856.0 45.3,856.0 47.4,856.0 48.2,856.0 49.9,856.0 52.0,856.0 54.0,856.0 56.5,856.0 59.0,856.0 60.7,856.0 63.2,856.0 65.7,856.0 67.3,856.0 69.0,856.0 70.7,856.0 73.2,856.0 74.9,853.3 76.6,855.8 78.2,855.0 79.9,856.0 80.7,856.0 81.6,856.0 82.4,856.0 84.9,856.0 86.6,856.0 88.2,856.0 90.3,856.0 92.0,856.0 93.2,856.0 95.3,856.0 97.4,856.0 99.9,856.0 102.4,856.0 104.1,856.0 105.8,856.0 107.4,856.0 109.9,856.0 112.8,856.0 114.9,856.0 116.6,856.0 118.3,856.0 119.9,856.0 122.4,856.0 124.5,856.0 126.6,856.0 128.3,856.0 130.8,856.0 132.4,856.0 134.0,856.0 135.7,856.0 138.2,856.0 140.2,856.0 142.3,856.0 145.3,856.0 147.3,856.0 149.8,856.0 151.6,856.0 153.5,856.0 155.3,856.0 157.6,856.0 159.9,856.0 161.6,856.0 163.2,856.0 164.9,856.0 167.4,856.0 169.4,856.0 171.3,856.0 173.2,856.0 175.3,856.0 177.4,856.0 179.1,856.0 180.7,856.0 182.3,856.0 184.0,856.0 185.7,856.0 187.4,856.0 189.0,856.0 191.5,856.0 193.2,856.0 194.9,856.0 197.4,856.0 199.9,856.0 201.6,856.0 203.2,856.0 204.9,856.0 207.8,856.0 209.9,856.0 212.4,856.0 213.2,855.0 214.9,854.5 216.6,855.8 218.3,856.0 219.9,856.0 221.6,856.0 224.1,856.0 226.6,856.0 228.6,856.0 230.7,856.0 232.4,856.0 234.1,856.0 236.2,856.0 238.3,856.0 240.4,856.0 242.4,856.0 244.1,856.0 245.8,856.0 248.3,856.0 249.9,856.0 251.6,856.0 254.0,856.0 255.7,856.0 257.3,856.0 259.4,856.0 261.5,856.0 263.1,856.0 264.8,856.0 266.5,856.0 268.2,856.0 270.7,856.0 272.8,856.0 274.9,856.0 276.1,856.0 279.0,856.0 281.1,856.0 282.8,856.0 284.9,856.0 287.4,856.0 289.0,856.0 290.7,856.0 292.4,856.0 294.0,856.0 296.5,856.0 299.0,856.0 300.7,856.0 302.4,856.0 304.5,856.0 306.6,856.0 309.5,856.0 310.7,856.0 312.4,856.0 314.0,856.0 316.6,856.0 319.1,856.0 320.7,856.0 323.2,856.0 324.9,856.0 326.6,856.0 328.6,856.0 330.7,856.0 332.0,856.0 333.2,856.0 334.5,856.0 336.2,856.0 339.1,856.0 341.6,856.0 343.6,856.0 345.7,856.0 348.3,856.0 350.7,856.0 352.8,856.0 354.9,856.0 356.2,856.0 358.7,856.0 360.8,856.0 362.5,856.0 364.1,856.0 365.8,856.0 367.4,856.0 369.1,856.0 371.6,856.0 374.0,856.0 375.6,856.0 377.3,856.0 379.8,856.0 381.9,856.0 384.0,856.0 386.9,856.0 389.4,856.0 391.5,856.0 394.4,856.0 396.3,856.0 398.2,856.0 399.9,856.0 401.5,856.0 404.0,856.0 405.7,856.0 407.4,856.0 409.0,856.0 410.7,856.0 412.4,856.0 414.0,856.0 415.7,856.0 417.4,856.0 419.0,856.0 421.5,856.0 423.2,856.0 424.9,856.0 427.4,856.0 429.1,856.0 430.7,856.0 432.4,856.0 435.3,856.0 435.7,856.0 437.4,856.0 439.1,856.0 440.8,856.0 442.4,856.0 444.1,856.0 445.3,856.0 446.6,856.0 448.2,856.0 449.9,856.0 451.6,856.0 454.1,856.0 456.6,856.0 459.1,856.0 461.6,856.0 464.5,856.0 467.4,856.0 469.9,856.0 471.6,856.0 472.8,856.0 475.8,856.0 477.5,856.0 479.1,856.0 480.8,856.0 482.4,856.0 484.9,856.0 487.4,856.0 490.3,856.0 492.0,856.0 494.0,856.0 496.0,856.0 497.9,856.0 499.9,856.0 502.0,856.0 504.7,856.0 507.9,856.0 510.0,856.0 511.6,856.0 513.2,856.0 515.8,856.0 517.4,856.0 520.6,856.0 522.8,856.0 524.9,856.0 527.0,856.0 528.8,856.0 530.6,856.0 532.4,856.0 534.2,856.0 536.1,856.0 538.1,856.0 540.0,856.0 542.0,856.0 544.1,856.0 546.8,856.0 549.4,856.0 551.2,856.0 552.9,856.0 554.7,856.0 556.9,856.0 559.0,856.0 560.6,856.0 562.8,856.0 564.9,856.0 567.5,856.0 569.1,856.0 571.8,856.0 573.9,856.0 576.6,856.0 578.3,856.0 580.0,856.0 582.1,856.0 584.2,856.0 587.4,856.0 589.0,856.0 590.7,850.2 592.0,845.6 594.4,840.0 596.2,856.0 598.2,856.0 600.2,856.0 602.2,856.0 604.6,848.4 607.3,842.8 609.4,845.7 611.5,848.4 614.3,840.0 616.6,844.7 618.7,838.1 620.8,831.7 624.0,825.2 625.4,839.1 627.3,842.8 630.0,856.0 632.8,856.0 634.7,856.0 636.5,856.0 637.9,856.0 639.5,856.0 641.2,856.0 643.9,856.0 646.7,856.0 649.0,856.0 651.4,856.0 654.1,856.0 656.9,856.0 659.5,856.0 661.0,856.0 662.9,856.0 664.8,856.0 666.6,856.0 668.5,856.0 671.5,856.0 673.8,856.0 676.0,856.0 679.0,856.0 680.9,856.0 682.8,856.0 685.0,856.0 687.6,856.0 689.5,856.0 691.8,856.0 694.0,856.0 695.5,856.0 697.5,856.0 699.5,856.0 701.5,856.0 704.5,856.0 706.0,856.0 707.5,856.0 710.5,856.0 711.6,856.0 714.3,856.0 717.3,856.0 718.8,856.0 721.0,856.0 723.3,856.0 725.5,856.0 728.5,856.0 731.5,856.0 733.8,856.0 736.0,856.0 739.0,856.0 742.0,856.0 743.8,856.0 745.5,856.0 747.3,856.0 748.8,856.0 751.0,856.0 753.2,856.0 755.5,856.0 757.0,856.0 760.0,856.0 762.8,856.0 764.5,856.0 766.2,856.0 767.9,856.0 770.2,856.0 772.5,856.0 773.9,856.0 776.7,856.0 778.5,856.0 780.4,856.0 782.2,856.0 783.6,856.0 785.5,856.0 788.7,856.0 790.4,856.0 792.0,856.0 795.2,856.0 797.3,856.0 799.4,856.0 801.5,856.0 803.6,856.0 805.4,856.0 808.2,856.0 810.5,856.0 812.8,856.0 814.7,856.0 817.5,856.0 820.2,856.0 823.0,856.0 824.9,856.0 827.7,856.0 830.4,856.0 832.2,856.0 834.1,856.0 836.9,856.0 838.5,856.0 840.2,856.0 842.0,856.0 843.6,856.0 845.3,856.0 847.1,856.0 849.0,856.0 851.8,856.0 853.6,856.0 855.5,856.0 857.3,856.0 860.1,856.0 862.9,856.0 865.7,856.0 867.5,856.0 869.2,856.0 870.9,856.0 872.6,856.0 874.9,856.0 877.7,856.0 880.0,856.0 881.1,856.0 883.9,856.0 885.8,856.0 887.8,856.0 889.5,856.0 891.1,856.0 893.9,856.0 896.7,856.0 899.5,856.0 901.1,856.0 902.3,856.0 904.2,856.0 906.2,856.0 908.9,856.0 911.2,856.0 912.8,856.0 915.1,856.0 917.8,856.0 920.0,856.0 922.3,856.0 924.0,856.0 925.6,856.0 927.3,856.0 929.0,856.0 930.6,856.0 932.3,856.0 933.9,856.0 935.6,856.0 937.9,856.0 940.6,856.0 942.3,856.0 943.9,856.0 945.6,856.0 947.9,856.0 950.1,856.0 952.3,856.0 954.5,856.0 956.2,856.0 957.9,856.0 960.1,856.0 961.8,856.0 963.4,856.0 965.1,856.0 966.8,856.0 968.6,856.0 970.5,856.0 972.3,856.0 974.6,856.0 976.8,856.0 979.0,856.0 981.2,856.0 983.5,856.0 985.7,856.0 987.4,856.0 989.0,856.0 990.8,856.0 992.7,856.0 994.5,856.0 996.6,856.0 998.4,856.0 1000.1,856.0 1001.8,856.0 1003.5,856.0 1005.6,856.0 1008.4,856.0 1010.1,855.3 1011.9,852.4 1014.0,836.4 1016.1,856.0 1018.1,856.0 1019.5,856.0 1021.1,856.0 1022.8,856.0 1024.4,856.0 1024.4,856.0" fill="url(#obg)"/>
<polygon points="14.0,916.0 14.0,920.1 15.3,916.0 17.8,916.0 19.8,922.6 21.9,916.0 23.2,916.0 25.3,916.0 26.5,916.0 28.4,916.0 30.4,916.0 32.3,916.0 34.4,916.0 36.5,916.0 37.4,916.0 39.0,916.0 40.7,916.0 43.2,916.0 45.3,916.0 47.4,916.0 48.2,916.0 49.9,916.0 52.0,916.0 54.0,916.0 56.5,916.0 59.0,916.0 60.7,916.0 63.2,916.0 65.7,916.0 67.3,916.0 69.0,916.0 70.7,916.0 73.2,916.0 74.9,916.0 76.6,916.0 78.2,916.0 79.9,916.0 80.7,916.0 81.6,916.0 82.4,916.0 84.9,916.0 86.6,916.0 88.2,916.0 90.3,916.0 92.0,916.0 93.2,916.0 95.3,916.0 97.4,916.0 99.9,916.0 102.4,916.0 104.1,916.0 105.8,916.0 107.4,916.0 109.9,916.0 112.8,916.0 114.9,916.0 116.6,916.0 118.3,916.0 119.9,916.0 122.4,916.0 124.5,916.0 126.6,916.0 128.3,916.0 130.8,916.0 132.4,916.0 134.0,916.0 135.7,916.0 138.2,916.0 140.2,916.0 142.3,916.0 145.3,916.0 147.3,916.0 149.8,916.0 151.6,916.0 153.5,916.0 155.3,916.0 157.6,916.0 159.9,916.0 161.6,916.0 163.2,916.0 164.9,918.4 167.4,916.0 169.4,916.0 171.3,916.0 173.2,916.0 175.3,916.0 177.4,916.0 179.1,920.8 180.7,925.9 182.3,919.9 184.0,916.0 185.7,916.0 187.4,916.0 189.0,916.0 191.5,916.0 193.2,916.0 194.9,916.0 197.4,916.0 199.9,916.0 201.6,916.0 203.2,916.0 204.9,916.0 207.8,916.0 209.9,916.0 212.4,916.0 213.2,916.0 214.9,916.0 216.6,916.0 218.3,916.0 219.9,916.0 221.6,916.0 224.1,916.0 226.6,916.0 228.6,916.0 230.7,916.0 232.4,916.0 234.1,916.0 236.2,916.0 238.3,916.0 240.4,916.0 242.4,916.0 244.1,916.0 245.8,916.0 248.3,916.0 249.9,916.0 251.6,916.0 254.0,916.0 255.7,916.0 257.3,916.0 259.4,916.0 261.5,916.0 263.1,916.0 264.8,916.0 266.5,916.0 268.2,916.0 270.7,916.0 272.8,916.0 274.9,916.0 276.1,916.0 279.0,919.2 281.1,922.6 282.8,916.0 284.9,916.0 287.4,916.0 289.0,916.0 290.7,916.0 292.4,916.0 294.0,916.0 296.5,916.0 299.0,916.0 300.7,916.0 302.4,916.0 304.5,916.0 306.6,916.0 309.5,916.0 310.7,916.0 312.4,916.0 314.0,916.0 316.6,916.0 319.1,916.0 320.7,916.0 323.2,916.0 324.9,916.0 326.6,916.0 328.6,916.0 330.7,916.0 332.0,916.0 333.2,916.0 334.5,916.0 336.2,916.0 339.1,916.0 341.6,916.0 343.6,916.0 345.7,916.0 348.3,916.0 350.7,916.0 352.8,916.0 354.9,916.0 356.2,916.0 358.7,916.0 360.8,916.0 362.5,916.0 364.1,916.0 365.8,916.0 367.4,916.0 369.1,916.0 371.6,916.0 374.0,916.0 375.6,916.0 377.3,916.0 379.8,916.0 381.9,916.0 384.0,916.0 386.9,916.0 389.4,916.0 391.5,916.0 394.4,916.0 396.3,916.0 398.2,916.0 399.9,916.0 401.5,916.0 404.0,916.0 405.7,916.0 407.4,916.0 409.0,916.0 410.7,916.0 412.4,916.0 414.0,916.0 415.7,924.2 417.4,924.3 419.0,922.6 421.5,928.4 423.2,916.0 424.9,916.0 427.4,916.0 429.1,916.0 430.7,916.0 432.4,916.0 435.3,916.0 435.7,916.0 437.4,916.6 439.1,918.4 440.8,921.3 442.4,922.6 444.1,916.0 445.3,916.0 446.6,916.0 448.2,916.0 449.9,916.0 451.6,916.0 454.1,916.0 456.6,916.0 459.1,916.0 461.6,916.0 464.5,916.0 467.4,916.0 469.9,916.0 471.6,916.0 472.8,916.0 475.8,916.0 477.5,916.0 479.1,916.0 480.8,916.0 482.4,916.0 484.9,916.0 487.4,916.0 490.3,916.0 492.0,916.0 494.0,916.0 496.0,916.0 497.9,916.0 499.9,916.0 502.0,916.0 504.7,916.0 507.9,916.0 510.0,916.0 511.6,916.0 513.2,916.0 515.8,916.0 517.4,916.0 520.6,916.0 522.8,916.0 524.9,916.0 527.0,916.0 528.8,916.0 530.6,916.0 532.4,916.0 534.2,916.0 536.1,916.0 538.1,916.0 540.0,916.0 542.0,916.0 544.1,916.0 546.8,916.0 549.4,916.0 551.2,916.0 552.9,916.0 554.7,916.0 556.9,916.0 559.0,916.0 560.6,916.0 562.8,916.0 564.9,916.0 567.5,916.0 569.1,916.0 571.8,916.0 573.9,916.0 576.6,916.0 578.3,916.0 580.0,916.0 582.1,916.0 584.2,916.0 587.4,916.0 589.0,916.0 590.7,916.0 592.0,916.0 594.4,916.0 596.2,916.0 598.2,916.0 600.2,916.0 602.2,916.0 604.6,916.0 607.3,916.0 609.4,916.0 611.5,916.0 614.3,916.0 616.6,916.0 618.7,916.0 620.8,916.0 624.0,916.0 625.4,916.0 627.3,916.0 630.0,916.0 632.8,916.0 634.7,916.0 636.5,916.0 637.9,916.0 639.5,916.0 641.2,916.0 643.9,916.0 646.7,916.0 649.0,916.0 651.4,916.0 654.1,916.0 656.9,916.0 659.5,916.0 661.0,916.0 662.9,916.0 664.8,916.0 666.6,916.0 668.5,916.0 671.5,916.0 673.8,916.0 676.0,916.0 679.0,916.0 680.9,916.0 682.8,916.0 685.0,916.0 687.6,916.0 689.5,916.0 691.8,916.0 694.0,916.0 695.5,916.0 697.5,916.0 699.5,916.0 701.5,916.0 704.5,916.0 706.0,916.0 707.5,916.0 710.5,916.0 711.6,916.0 714.3,916.0 717.3,916.0 718.8,916.0 721.0,916.0 723.3,916.0 725.5,916.0 728.5,916.0 731.5,916.0 733.8,916.0 736.0,916.0 739.0,916.0 742.0,916.0 743.8,916.0 745.5,916.0 747.3,916.0 748.8,916.0 751.0,919.8 753.2,916.0 755.5,916.0 757.0,916.0 760.0,916.0 762.8,916.0 764.5,917.5 766.2,921.4 767.9,923.4 770.2,916.0 772.5,916.9 773.9,916.0 776.7,916.0 778.5,916.0 780.4,916.0 782.2,916.0 783.6,916.0 785.5,916.0 788.7,916.0 790.4,916.0 792.0,916.0 795.2,916.0 797.3,916.0 799.4,916.0 801.5,916.0 803.6,916.0 805.4,916.0 808.2,916.0 810.5,916.0 812.8,916.0 814.7,928.0 817.5,916.0 820.2,916.0 823.0,916.0 824.9,916.0 827.7,916.0 830.4,916.0 832.2,916.0 834.1,916.0 836.9,916.0 838.5,916.0 840.2,916.0 842.0,916.0 843.6,916.0 845.3,916.0 847.1,916.0 849.0,916.0 851.8,916.0 853.6,916.0 855.5,916.0 857.3,918.8 860.1,916.0 862.9,916.0 865.7,916.0 867.5,916.0 869.2,918.7 870.9,924.7 872.6,931.8 874.9,916.0 877.7,916.0 880.0,916.0 881.1,917.9 883.9,916.8 885.8,917.5 887.8,919.0 889.5,916.0 891.1,916.0 893.9,916.0 896.7,916.0 899.5,916.0 901.1,916.0 902.3,916.0 904.2,916.0 906.2,916.0 908.9,916.0 911.2,916.0 912.8,916.0 915.1,924.6 917.8,934.6 920.0,938.4 922.3,941.8 924.0,932.1 925.6,923.4 927.3,916.0 929.0,916.0 930.6,916.0 932.3,916.0 933.9,916.0 935.6,916.0 937.9,916.0 940.6,916.0 942.3,916.0 943.9,916.0 945.6,916.0 947.9,916.0 950.1,916.0 952.3,916.0 954.5,916.0 956.2,916.0 957.9,916.0 960.1,916.0 961.8,916.0 963.4,916.0 965.1,916.0 966.8,916.0 968.6,916.0 970.5,916.0 972.3,916.0 974.6,916.0 976.8,916.0 979.0,916.0 981.2,916.0 983.5,916.0 985.7,916.0 987.4,916.0 989.0,916.0 990.8,916.0 992.7,916.0 994.5,916.0 996.6,916.0 998.4,916.0 1000.1,916.0 1001.8,916.0 1003.5,916.0 1005.6,916.0 1008.4,916.0 1010.1,916.0 1011.9,916.0 1014.0,916.0 1016.1,916.0 1018.1,916.0 1019.5,916.0 1021.1,916.0 1022.8,916.0 1024.4,916.0 1024.4,916.0" fill="url(#osg)"/>
<polyline points="14.0,920.1 15.3,911.7 17.8,911.7 19.8,922.6 21.9,911.7 23.2,907.6 25.3,906.7 26.5,900.0 28.4,894.6 30.4,889.6 32.3,884.2 34.4,892.9 36.5,900.0 37.4,905.9 39.0,906.2 40.7,906.7 43.2,901.7 45.3,908.4 47.4,899.2 48.2,877.5 49.9,883.4 52.0,883.0 54.0,882.5 56.5,893.4 59.0,887.5 60.7,890.9 63.2,885.5 65.7,886.7 67.3,880.2 69.0,873.4 70.7,861.7 73.2,860.0 74.9,853.3 76.6,855.8 78.2,855.0 79.9,860.0 80.7,860.0 81.6,875.0 82.4,877.5 84.9,875.9 86.6,881.1 88.2,887.5 90.3,888.4 92.0,891.7 93.2,880.0 95.3,888.4 97.4,896.7 99.9,875.9 102.4,872.5 104.1,872.5 105.8,885.3 107.4,897.5 109.9,897.5 112.8,904.2 114.9,895.9 116.6,901.1 118.3,905.1 119.9,895.9 122.4,900.9 124.5,900.9 126.6,902.6 128.3,903.4 130.8,896.7 132.4,901.7 134.0,909.2 135.7,901.7 138.2,892.5 140.2,890.5 142.3,889.2 145.3,911.7 147.3,903.4 149.8,902.6 151.6,897.0 153.5,893.8 155.3,888.4 157.6,896.7 159.9,904.2 161.6,908.0 163.2,914.6 164.9,918.4 167.4,896.7 169.4,895.0 171.3,900.1 173.2,903.4 175.3,913.4 177.4,915.1 179.1,920.8 180.7,925.9 182.3,919.9 184.0,913.4 185.7,909.8 187.4,907.6 189.0,907.6 191.5,911.7 193.2,909.1 194.9,908.4 197.4,885.9 199.9,885.0 201.6,880.5 203.2,875.9 204.9,881.7 207.8,875.0 209.9,881.7 212.4,875.9 213.2,855.0 214.9,854.5 216.6,855.8 218.3,859.4 219.9,863.7 221.6,868.4 224.1,872.5 226.6,870.0 228.6,873.3 230.7,878.4 232.4,873.3 234.1,868.4 236.2,873.3 238.3,878.4 240.4,876.1 242.4,872.5 244.1,877.1 245.8,881.7 248.3,877.5 249.9,868.4 251.6,877.5 254.0,885.9 255.7,886.2 257.3,885.9 259.4,876.7 261.5,883.4 263.1,882.1 264.8,880.9 266.5,883.7 268.2,885.9 270.7,883.4 272.8,898.3 274.9,913.4 276.1,915.1 279.0,919.2 281.1,922.6 282.8,910.9 284.9,912.6 287.4,911.7 289.0,891.7 290.7,874.2 292.4,878.4 294.0,874.2 296.5,872.1 299.0,877.9 300.7,874.4 302.4,871.7 304.5,873.4 306.6,883.4 309.5,885.9 310.7,896.7 312.4,898.9 314.0,899.2 316.6,904.2 319.1,901.7 320.7,910.9 323.2,909.2 324.9,911.0 326.6,910.9 328.6,912.0 330.7,911.7 332.0,905.9 333.2,891.7 334.5,901.7 336.2,898.4 339.1,881.7 341.6,895.0 343.6,888.4 345.7,880.9 348.3,885.9 350.7,887.1 352.8,888.2 354.9,890.0 356.2,875.9 358.7,867.5 360.8,881.7 362.5,882.8 364.1,885.0 365.8,888.3 367.4,892.5 369.1,890.9 371.6,909.2 374.0,905.9 375.6,906.3 377.3,908.4 379.8,896.7 381.9,893.5 384.0,889.2 386.9,908.4 389.4,898.4 391.5,891.7 394.4,887.5 396.3,889.4 398.2,891.7 399.9,891.5 401.5,890.0 404.0,901.7 405.7,902.7 407.4,904.2 409.0,907.6 410.7,898.4 412.4,898.4 414.0,905.1 415.7,924.2 417.4,924.3 419.0,922.6 421.5,928.4 423.2,915.1 424.9,896.7 427.4,899.2 429.1,900.7 430.7,899.9 432.4,901.7 435.3,905.9 435.7,915.9 437.4,916.6 439.1,918.4 440.8,921.3 442.4,922.6 444.1,904.2 445.3,887.5 446.6,910.9 448.2,911.7 449.9,896.7 451.6,894.2 454.1,893.4 456.6,883.4 459.1,884.2 461.6,873.4 464.5,880.9 467.4,877.5 469.9,879.2 471.6,878.4 472.8,888.4 475.8,883.4 477.5,882.9 479.1,882.5 480.8,881.4 482.4,878.4 484.9,891.7 487.4,891.7 490.3,899.2 492.0,889.2 494.0,896.0 496.0,899.4 497.9,902.3 499.9,906.7 502.0,899.2 504.7,901.3 507.9,894.9 510.0,893.9 511.6,900.3 513.2,887.5 515.8,906.7 517.4,891.7 520.6,889.6 522.8,900.3 524.9,896.0 527.0,893.9 528.8,893.8 530.6,893.7 532.4,892.8 534.2,886.5 536.1,881.1 538.1,881.3 540.0,882.9 542.0,884.3 544.1,891.7 546.8,864.0 549.4,883.2 551.2,888.0 552.9,891.5 554.7,894.9 556.9,889.6 559.0,888.5 560.6,881.1 562.8,880.3 564.9,881.1 567.5,883.2 569.1,880.0 571.8,906.7 573.9,899.2 576.6,901.3 578.3,892.8 580.0,885.4 582.1,878.2 584.2,872.5 587.4,882.7 589.0,865.6 590.7,850.2 592.0,845.6 594.4,840.0 596.2,860.4 598.2,860.1 600.2,857.9 602.2,857.6 604.6,848.4 607.3,842.8 609.4,845.7 611.5,848.4 614.3,840.0 616.6,844.7 618.7,838.1 620.8,831.7 624.0,825.2 625.4,839.1 627.3,842.8 630.0,874.3 632.8,865.0 634.7,871.5 636.5,871.5 637.9,883.6 639.5,884.8 641.2,887.3 643.9,892.9 646.7,899.3 649.0,891.0 651.4,892.9 654.1,890.1 656.9,896.6 659.5,899.5 661.0,895.0 662.9,895.1 664.8,894.3 666.6,894.3 668.5,895.8 671.5,895.0 673.8,895.3 676.0,895.0 679.0,897.3 680.9,901.0 682.8,898.8 685.0,908.5 687.6,888.3 689.5,895.0 691.8,901.8 694.0,898.8 695.5,882.3 697.5,874.3 699.5,867.6 701.5,860.5 704.5,883.8 706.0,874.0 707.5,877.0 710.5,879.3 711.6,892.8 714.3,886.0 717.3,898.0 718.8,894.3 721.0,897.3 723.3,894.3 725.5,904.8 728.5,894.3 731.5,895.8 733.8,890.3 736.0,886.0 739.0,893.5 742.0,895.8 743.8,895.6 745.5,897.2 747.3,896.5 748.8,915.3 751.0,919.8 753.2,915.5 755.5,910.0 757.0,895.0 760.0,908.6 762.8,915.1 764.5,917.5 766.2,921.4 767.9,923.4 770.2,915.1 772.5,916.9 773.9,891.0 776.7,887.3 778.5,893.3 780.4,893.4 782.2,894.7 783.6,903.0 785.5,895.6 788.7,899.3 790.4,900.0 792.0,901.2 795.2,896.5 797.3,896.8 799.4,895.6 801.5,898.2 803.6,900.2 805.4,897.9 808.2,905.8 810.5,908.6 812.8,904.9 814.7,928.0 817.5,900.2 820.2,892.8 823.0,879.9 824.9,886.3 827.7,885.4 830.4,892.8 832.2,886.9 834.1,882.6 836.9,885.4 838.5,879.9 840.2,872.4 842.0,882.6 843.6,882.0 845.3,882.6 847.1,896.5 849.0,894.7 851.8,916.0 853.6,912.3 855.5,909.5 857.3,918.8 860.1,910.4 862.9,908.6 865.7,913.2 867.5,911.4 869.2,918.7 870.9,924.7 872.6,931.8 874.9,911.4 877.7,907.7 880.0,910.1 881.1,917.9 883.9,916.8 885.8,917.5 887.8,919.0 889.5,908.1 891.1,899.0 893.9,902.3 896.7,903.4 899.5,906.8 901.1,900.1 902.3,906.8 904.2,902.3 906.2,899.5 908.9,905.6 911.2,910.1 912.8,907.9 915.1,924.6 917.8,934.6 920.0,938.4 922.3,941.8 924.0,932.1 925.6,923.4 927.3,902.0 929.0,880.1 930.6,887.8 932.3,887.2 933.9,887.0 935.6,886.7 937.9,896.7 940.6,890.1 942.3,891.8 943.9,891.5 945.6,892.3 947.9,885.6 950.1,885.7 952.3,885.6 954.5,887.8 956.2,893.0 957.9,896.7 960.1,884.5 961.8,885.5 963.4,887.8 965.1,889.9 966.8,893.4 968.6,895.3 970.5,896.2 972.3,896.7 974.6,903.4 976.8,899.0 979.0,905.6 981.2,896.7 983.5,891.2 985.7,886.7 987.4,890.1 989.0,894.8 990.8,897.3 992.7,899.8 994.5,901.0 996.6,882.3 998.4,880.6 1000.1,880.2 1001.8,879.4 1003.5,876.7 1005.6,862.8 1008.4,856.6 1010.1,855.3 1011.9,852.4 1014.0,836.4 1016.1,858.6 1018.1,886.4 1019.5,883.0 1021.1,884.1 1022.8,884.6 1024.4,885.7" fill="none" stroke="#7e57c2" stroke-width="1.5" stroke-linejoin="round"/>
<path d="M14.0 903.4C14.7 904.1 16.5 905.9 18.2 907.6C19.9 909.3 22.2 912.7 24.0 913.4C25.8 914.1 26.9 913.7 29.0 911.7C31.1 909.8 34.5 903.4 36.5 901.7C38.5 900.0 39.5 901.8 40.7 901.3C42.0 900.8 42.6 899.4 44.0 898.4C45.4 897.4 47.0 895.6 49.0 895.0C51.0 894.4 53.2 895.8 55.7 895.0C58.2 894.2 61.2 892.2 64.0 890.0C66.8 887.8 70.2 884.1 72.4 881.7C74.6 879.4 76.0 877.7 77.4 875.9C78.8 874.1 79.0 872.1 80.7 870.9C82.4 869.6 85.0 868.0 87.4 868.4C89.8 868.8 92.8 871.5 94.9 873.4C97.0 875.3 98.2 878.3 99.9 880.0C101.6 881.7 102.5 881.9 104.9 883.4C107.3 884.9 111.6 887.8 114.1 889.2C116.6 890.6 117.8 890.0 119.9 891.7C122.0 893.4 124.2 897.8 126.6 899.2C128.9 900.6 131.4 900.1 134.0 900.0C136.6 899.9 139.5 898.8 142.3 898.8C145.1 898.8 148.0 900.2 150.7 900.0C153.3 899.8 155.7 897.2 158.2 897.5C160.7 897.8 163.5 901.4 165.7 901.7C167.9 902.0 169.8 899.3 171.5 899.2C173.2 899.1 173.8 899.1 175.7 900.9C177.6 902.7 181.1 908.7 183.2 910.1C185.3 911.5 186.2 908.7 188.2 909.2C190.1 909.7 192.9 913.1 194.9 913.0C196.9 912.9 198.2 911.1 199.9 908.4C201.6 905.7 203.1 899.8 204.9 896.7C206.7 893.6 208.8 893.3 210.7 890.0C212.6 886.7 214.6 880.0 216.6 876.7C218.6 873.4 220.6 871.3 222.4 870.0C224.2 868.7 225.5 869.3 227.4 868.8C229.3 868.3 232.2 866.7 234.1 867.1C236.0 867.5 236.6 870.0 239.1 871.3C241.6 872.6 246.6 874.2 249.1 875.0C251.6 875.8 252.3 875.2 254.0 875.9C255.7 876.6 256.2 878.2 259.0 879.2C261.8 880.2 267.8 880.2 270.7 881.7C273.6 883.2 274.7 886.0 276.5 888.4C278.3 890.8 279.6 893.3 281.5 895.9C283.4 898.5 285.8 903.4 288.2 904.2C290.6 905.0 293.1 904.4 295.7 900.9C298.3 897.4 301.5 887.2 304.0 883.4C306.5 879.6 308.2 877.2 310.7 877.9C313.2 878.6 316.7 884.2 319.1 887.5C321.5 890.8 322.8 894.4 324.9 897.5C327.0 900.6 329.5 904.5 331.6 905.9C333.7 907.3 335.6 906.4 337.4 905.9C339.2 905.4 340.2 905.0 342.4 902.6C344.6 900.2 348.2 894.2 350.7 891.7C353.2 889.2 355.6 889.0 357.4 887.5C359.2 886.0 360.2 883.7 361.6 883.0C363.0 882.3 364.3 882.6 365.8 883.4C367.3 884.1 369.4 886.5 370.8 887.5C372.2 888.5 372.2 887.8 374.0 889.2C375.8 890.6 378.9 894.2 381.5 895.9C384.1 897.6 387.4 899.8 389.8 899.6C392.2 899.5 393.8 896.2 395.7 895.0C397.6 893.8 399.6 892.5 401.5 892.5C403.4 892.5 405.4 894.5 407.4 895.0C409.3 895.5 411.3 894.2 413.2 895.5C415.1 896.8 417.3 900.3 419.0 902.6C420.7 904.9 421.0 908.2 423.2 909.2C425.4 910.2 430.0 908.5 432.4 908.8C434.8 909.1 435.6 910.7 437.4 910.9C439.2 911.1 441.8 910.9 443.2 910.1C444.6 909.3 444.7 906.3 445.7 905.9C446.7 905.5 447.7 907.5 449.1 907.6C450.5 907.7 452.0 908.4 454.1 906.3C456.2 904.2 458.7 898.8 461.6 895.0C464.5 891.2 468.8 885.8 471.6 883.4C474.4 881.0 476.5 881.4 478.3 880.9C480.1 880.4 480.6 880.0 482.4 880.5C484.2 881.0 487.2 883.0 489.1 884.2C491.0 885.4 491.2 885.2 494.0 887.5C496.8 889.8 502.1 896.2 505.7 898.1C509.2 900.0 512.4 899.1 515.3 898.7C518.1 898.4 519.2 896.8 522.8 896.0C526.3 895.2 533.8 894.8 536.6 893.9C539.4 893.0 538.5 891.4 539.8 890.7C541.0 890.0 542.5 890.7 544.1 889.6C545.7 888.5 547.1 885.1 549.4 884.3C551.7 883.5 554.9 884.8 557.9 884.8C560.9 884.8 565.0 883.7 567.5 884.3C570.0 884.9 570.8 887.7 572.9 888.5C575.0 889.3 577.4 889.4 580.0 889.1C582.6 888.8 585.8 889.4 588.3 886.8C590.8 884.2 591.7 878.6 594.8 873.4C597.9 868.2 603.8 859.7 606.9 855.8C610.0 851.9 611.7 851.2 613.4 850.2C615.1 849.2 615.7 850.4 617.1 849.8C618.5 849.2 620.2 848.0 621.7 846.5C623.2 845.0 625.1 841.3 626.3 840.5C627.5 839.7 628.0 841.4 629.1 841.9C630.2 842.4 631.1 841.7 632.8 843.7C634.5 845.7 637.4 850.6 639.3 853.9C641.1 857.1 642.0 858.2 643.9 863.2C645.8 868.2 648.7 879.8 650.4 883.6C652.1 887.4 652.2 884.2 654.1 885.9C656.0 887.5 659.1 892.0 661.8 893.5C664.4 895.0 667.1 894.6 670.0 895.0C672.9 895.4 676.5 895.6 679.0 896.1C681.5 896.6 682.5 897.5 685.0 898.0C687.5 898.5 691.5 899.3 694.0 898.8C696.5 898.3 698.2 896.6 700.0 895.0C701.8 893.4 703.0 891.0 704.5 889.0C706.0 887.0 707.8 884.1 709.0 883.0C710.2 881.9 710.8 882.8 712.0 882.3C713.2 881.8 714.8 879.8 716.5 880.0C718.2 880.2 720.9 882.2 722.5 883.8C724.1 885.4 724.5 888.0 726.3 889.8C728.0 891.6 729.5 893.8 733.0 894.6C736.5 895.4 744.2 894.0 747.3 894.6C750.4 895.2 750.2 896.9 751.8 898.0C753.4 899.1 755.6 900.0 757.0 901.0C758.4 902.0 758.7 902.6 760.0 903.9C761.3 905.2 762.9 906.9 764.6 908.6C766.3 910.3 768.3 914.0 770.2 914.1C772.1 914.2 772.9 911.4 775.8 909.5C778.7 907.6 784.6 905.2 787.8 903.0C791.0 900.8 792.4 896.9 795.2 896.1C798.0 895.3 801.5 897.6 804.5 898.4C807.5 899.2 811.1 899.7 813.3 900.7C815.5 901.7 816.2 903.9 817.5 904.4C818.8 904.9 819.5 904.8 821.2 903.9C822.9 903.0 825.6 900.7 827.7 899.3C829.9 897.9 832.1 897.8 834.1 895.6C836.1 893.4 838.0 888.1 839.7 886.3C841.4 884.4 842.8 884.3 844.3 884.5C845.8 884.7 847.1 886.1 849.0 887.3C850.9 888.5 853.0 889.1 855.5 891.9C858.0 894.7 861.0 900.0 863.8 903.9C866.6 907.8 869.4 913.3 872.1 915.1C874.8 916.9 877.0 914.6 880.0 914.5C883.0 914.4 887.2 915.5 890.0 914.5C892.8 913.5 894.5 909.5 896.7 908.4C898.9 907.3 901.2 908.7 903.4 907.9C905.6 907.1 908.1 903.6 910.0 903.4C911.9 903.2 912.6 904.8 914.5 906.8C916.4 908.8 919.2 913.2 921.2 915.6C923.2 918.0 924.5 921.2 926.7 921.2C928.9 921.2 931.9 918.9 934.5 915.6C937.1 912.3 939.7 905.6 942.3 901.2C944.9 896.9 947.5 891.3 950.1 889.5C952.7 887.7 955.7 890.8 957.9 890.6C960.1 890.4 961.5 888.7 963.4 888.4C965.2 888.1 966.8 888.2 969.0 889.0C971.2 889.8 974.0 892.1 976.8 893.4C979.6 894.7 982.8 896.0 985.7 896.7C988.7 897.4 991.6 898.6 994.5 897.6C997.4 896.6 1000.1 893.6 1002.9 890.6C1005.7 887.6 1008.7 883.3 1011.2 879.5C1013.7 875.7 1015.9 869.6 1018.1 867.7C1020.3 865.9 1023.4 868.3 1024.4 868.4" fill="none" stroke="#f0d335" stroke-width="1.7" stroke-linejoin="round"/>
</g>
<text x="25.2" y="65.8" font-size="17" fill="#bfbfbf" stroke="#bfbfbf" stroke-width="0.3" font-weight="normal" textLength="225.7" lengthAdjust="spacingAndGlyphs">XRP / TetherUS · 4h · Binance</text>
<text x="261.5" y="65.8" font-size="17" fill="#bfbfbf" stroke="#bfbfbf" stroke-width="0.3" font-weight="normal" textLength="11.5" lengthAdjust="spacingAndGlyphs">O</text>
<text x="274.7" y="65.8" font-size="17" fill="#f23645" stroke="#f23645" stroke-width="0.3" font-weight="normal" textLength="48.4" lengthAdjust="spacingAndGlyphs">1.4617</text>
<text x="334.8" y="65.8" font-size="17" fill="#bfbfbf" stroke="#bfbfbf" stroke-width="0.3" font-weight="normal" textLength="10" lengthAdjust="spacingAndGlyphs">H</text>
<text x="346" y="65.8" font-size="17" fill="#f23645" stroke="#f23645" stroke-width="0.3" font-weight="normal" textLength="49" lengthAdjust="spacingAndGlyphs">1.4759</text>
<text x="406.7" y="65.8" font-size="17" fill="#bfbfbf" stroke="#bfbfbf" stroke-width="0.3" font-weight="normal" textLength="8" lengthAdjust="spacingAndGlyphs">L</text>
<text x="415.5" y="65.8" font-size="17" fill="#f23645" stroke="#f23645" stroke-width="0.3" font-weight="normal" textLength="49.2" lengthAdjust="spacingAndGlyphs">1.4485</text>
<text x="475.6" y="65.8" font-size="17" fill="#bfbfbf" stroke="#bfbfbf" stroke-width="0.3" font-weight="normal" textLength="9.8" lengthAdjust="spacingAndGlyphs">C</text>
<text x="486" y="65.8" font-size="17" fill="#f23645" stroke="#f23645" stroke-width="0.3" font-weight="normal" textLength="49.8" lengthAdjust="spacingAndGlyphs">1.4598</text>
<text x="546.7" y="65.8" font-size="17" fill="#f23645" stroke="#f23645" stroke-width="0.3" font-weight="normal" textLength="128" lengthAdjust="spacingAndGlyphs">−0.0018 (−0.12%)</text>
<text x="25.2" y="89.6" font-size="17" fill="#bfbfbf" stroke="#bfbfbf" stroke-width="0.3" font-weight="normal" textLength="165.8" lengthAdjust="spacingAndGlyphs">BB (20, SMA, close, 2)</text>
<text x="203" y="89.6" font-size="17" fill="#2962ff" stroke="#2962ff" stroke-width="0.3" font-weight="normal" textLength="49" lengthAdjust="spacingAndGlyphs">1.4605</text>
<text x="263.6" y="89.6" font-size="17" fill="#f23645" stroke="#f23645" stroke-width="0.3" font-weight="normal" textLength="48.9" lengthAdjust="spacingAndGlyphs">1.6016</text>
<text x="324.8" y="89.6" font-size="17" fill="#089981" stroke="#089981" stroke-width="0.3" font-weight="normal" textLength="49" lengthAdjust="spacingAndGlyphs">1.3194</text>
<text x="25.6" y="838.7" font-size="17" fill="#bfbfbf" stroke="#bfbfbf" stroke-width="0.3" font-weight="normal" textLength="107" lengthAdjust="spacingAndGlyphs">RSI (14, close)</text>
<text x="143.4" y="838.7" font-size="17" fill="#8a63d2" stroke="#8a63d2" stroke-width="0.3" font-weight="normal" textLength="41" lengthAdjust="spacingAndGlyphs">50.08</text>
<text x="195.6" y="838.7" font-size="17" fill="#f0d335" stroke="#f0d335" stroke-width="0.3" font-weight="bold" textLength="41" lengthAdjust="spacingAndGlyphs">61.82</text>
<text x="1573" y="90.6" font-size="16.3" fill="#c4c4c4" stroke="#c4c4c4" stroke-width="0.35" text-anchor="end">3.0000</text>
<text x="1573" y="138.8" font-size="16.3" fill="#c4c4c4" stroke="#c4c4c4" stroke-width="0.35" text-anchor="end">2.8000</text>
<text x="1573" y="190.6" font-size="16.3" fill="#c4c4c4" stroke="#c4c4c4" stroke-width="0.35" text-anchor="end">2.6000</text>
<text x="1573" y="246.5" font-size="16.3" fill="#c4c4c4" stroke="#c4c4c4" stroke-width="0.35" text-anchor="end">2.4000</text>
<text x="1573" y="307.4" font-size="16.3" fill="#c4c4c4" stroke="#c4c4c4" stroke-width="0.35" text-anchor="end">2.2000</text>
<text x="1573" y="374.0" font-size="16.3" fill="#c4c4c4" stroke="#c4c4c4" stroke-width="0.35" text-anchor="end">2.0000</text>
<text x="1573" y="447.6" font-size="16.3" fill="#c4c4c4" stroke="#c4c4c4" stroke-width="0.35" text-anchor="end">1.8000</text>
<text x="1573" y="508.5" font-size="16.3" fill="#c4c4c4" stroke="#c4c4c4" stroke-width="0.35" text-anchor="end">1.6500</text>
<text x="1573" y="552.2" font-size="16.3" fill="#c4c4c4" stroke="#c4c4c4" stroke-width="0.35" text-anchor="end">1.5500</text>
<text x="1573" y="648.7" font-size="16.3" fill="#c4c4c4" stroke="#c4c4c4" stroke-width="0.35" text-anchor="end">1.3500</text>
<text x="1573" y="691.4" font-size="16.3" fill="#c4c4c4" stroke="#c4c4c4" stroke-width="0.35" text-anchor="end">1.2700</text>
<text x="1573" y="736.9" font-size="16.3" fill="#c4c4c4" stroke="#c4c4c4" stroke-width="0.35" text-anchor="end">1.1900</text>
<text x="1573" y="779.3" font-size="16.3" fill="#c4c4c4" stroke="#c4c4c4" stroke-width="0.35" text-anchor="end">1.1200</text>
<text x="1564" y="847" font-size="16.3" fill="#c4c4c4" stroke="#c4c4c4" stroke-width="0.35" text-anchor="end">80.00</text>
<text x="1564" y="906.5" font-size="16.3" fill="#c4c4c4" stroke="#c4c4c4" stroke-width="0.35" text-anchor="end">40.00</text>
<path d="M1511 576H1577.5Q1580.5 576 1580.5 579V617Q1580.5 620 1577.5 620H1511Z" fill="#9575cd"/>
<text x="1573" y="595" font-size="16.8" fill="#ffffff" stroke="#ffffff" stroke-width="0.5" text-anchor="end">1.4598</text>
<text x="1523.6" y="614.4" font-size="16.3" fill="#ece4f7" stroke="#ece4f7" stroke-width="0.3">13:49</text>
<text x="274.5" y="981" font-size="16.3" fill="#c2c2c2" stroke="#c2c2c2" stroke-width="0.35" text-anchor="middle" font-weight="normal">Dec</text>
<text x="575.5" y="981" font-size="17.2" fill="#c2c2c2" stroke="#c2c2c2" stroke-width="0" text-anchor="middle" font-weight="bold">2026</text>
<text x="876.5" y="981" font-size="16.3" fill="#c2c2c2" stroke="#c2c2c2" stroke-width="0.35" text-anchor="middle" font-weight="normal">Feb</text>
<text x="1147.5" y="981" font-size="16.3" fill="#c2c2c2" stroke="#c2c2c2" stroke-width="0.35" text-anchor="middle" font-weight="normal">Mar</text>
<text x="1448.5" y="981" font-size="16.3" fill="#c2c2c2" stroke="#c2c2c2" stroke-width="0.35" text-anchor="middle" font-weight="normal">Apr</text>
<rect x="1512" y="39" width="72" height="43.5" fill="#101010"/>
<rect x="1515.5" y="43.5" width="65" height="37" rx="8" fill="#0f0f0f" stroke="#323232" stroke-width="1.2"/>
<text x="1548" y="68" font-size="15.5" fill="#e6e6e6" text-anchor="middle" stroke="#e6e6e6" stroke-width="0.5">USDT</text>
<path d="M16.9 1025.1H33.9V1046.7H24.9V1034.1H16.9Z" fill="#dcdcdc"/>
<circle cx="40.9" cy="1029.4" r="4.3" fill="#dcdcdc"/>
<path d="M49.9 1025.1H59.6L51.4 1046.7H40.9Z" fill="#dcdcdc"/>
<g fill="#dcdcdc"><path d="M69 1025.1H84.7V1029.8H79V1046.5H74.7V1029.8H69Z"/><rect x="84.7" y="1030.6" width="4.3" height="15.9"/><rect x="106" y="1030.4" width="4.1" height="16.1"/><rect x="124.1" y="1025.1" width="4.4" height="21.4"/><rect x="131.3" y="1030.6" width="4.5" height="15.9"/><circle cx="133.55" cy="1027" r="2.6"/><rect x="138.1" y="1030.6" width="4.3" height="15.9"/><rect x="166.6" y="1030.6" width="4.3" height="15"/><path d="M170 1025H175.3L181.15 1039.4L186.6 1025H191.9L183.6 1046.4H178.7Z"/><rect x="193.4" y="1030.6" width="4.4" height="15.9"/><circle cx="195.6" cy="1026.9" r="2.65"/><rect x="201" y="1037.2" width="14.9" height="3"/><path d="M216.2 1031H220.9L223.3 1039.9L226.2 1031H229.6L232.5 1039.9L235.1 1031H240L234.7 1046.4H231.5L227.9 1038.5L224.8 1046.4H221.4Z"/></g>
<g fill="none" stroke="#dcdcdc" stroke-width="4.3"><path d="M86.85 1039V1037C86.85 1033.2 89.5 1032.75 95.3 1032.75"/><circle cx="102.05" cy="1038.45" r="5.9"/><circle cx="120.5" cy="1038.45" r="5.85"/><path d="M140.25 1046.5V1037.2A4.97 4.97 0 0 1 150.2 1037.2V1046.5"/><circle cx="162.7" cy="1038.45" r="5.85"/><path d="M168.75 1044V1045.8C168.75 1050.2 166 1050.85 156 1050.85"/><path d="M213.75 1038.4A5.6 5.6 0 1 0 212.44 1042"/></g>
</svg></body></html>
